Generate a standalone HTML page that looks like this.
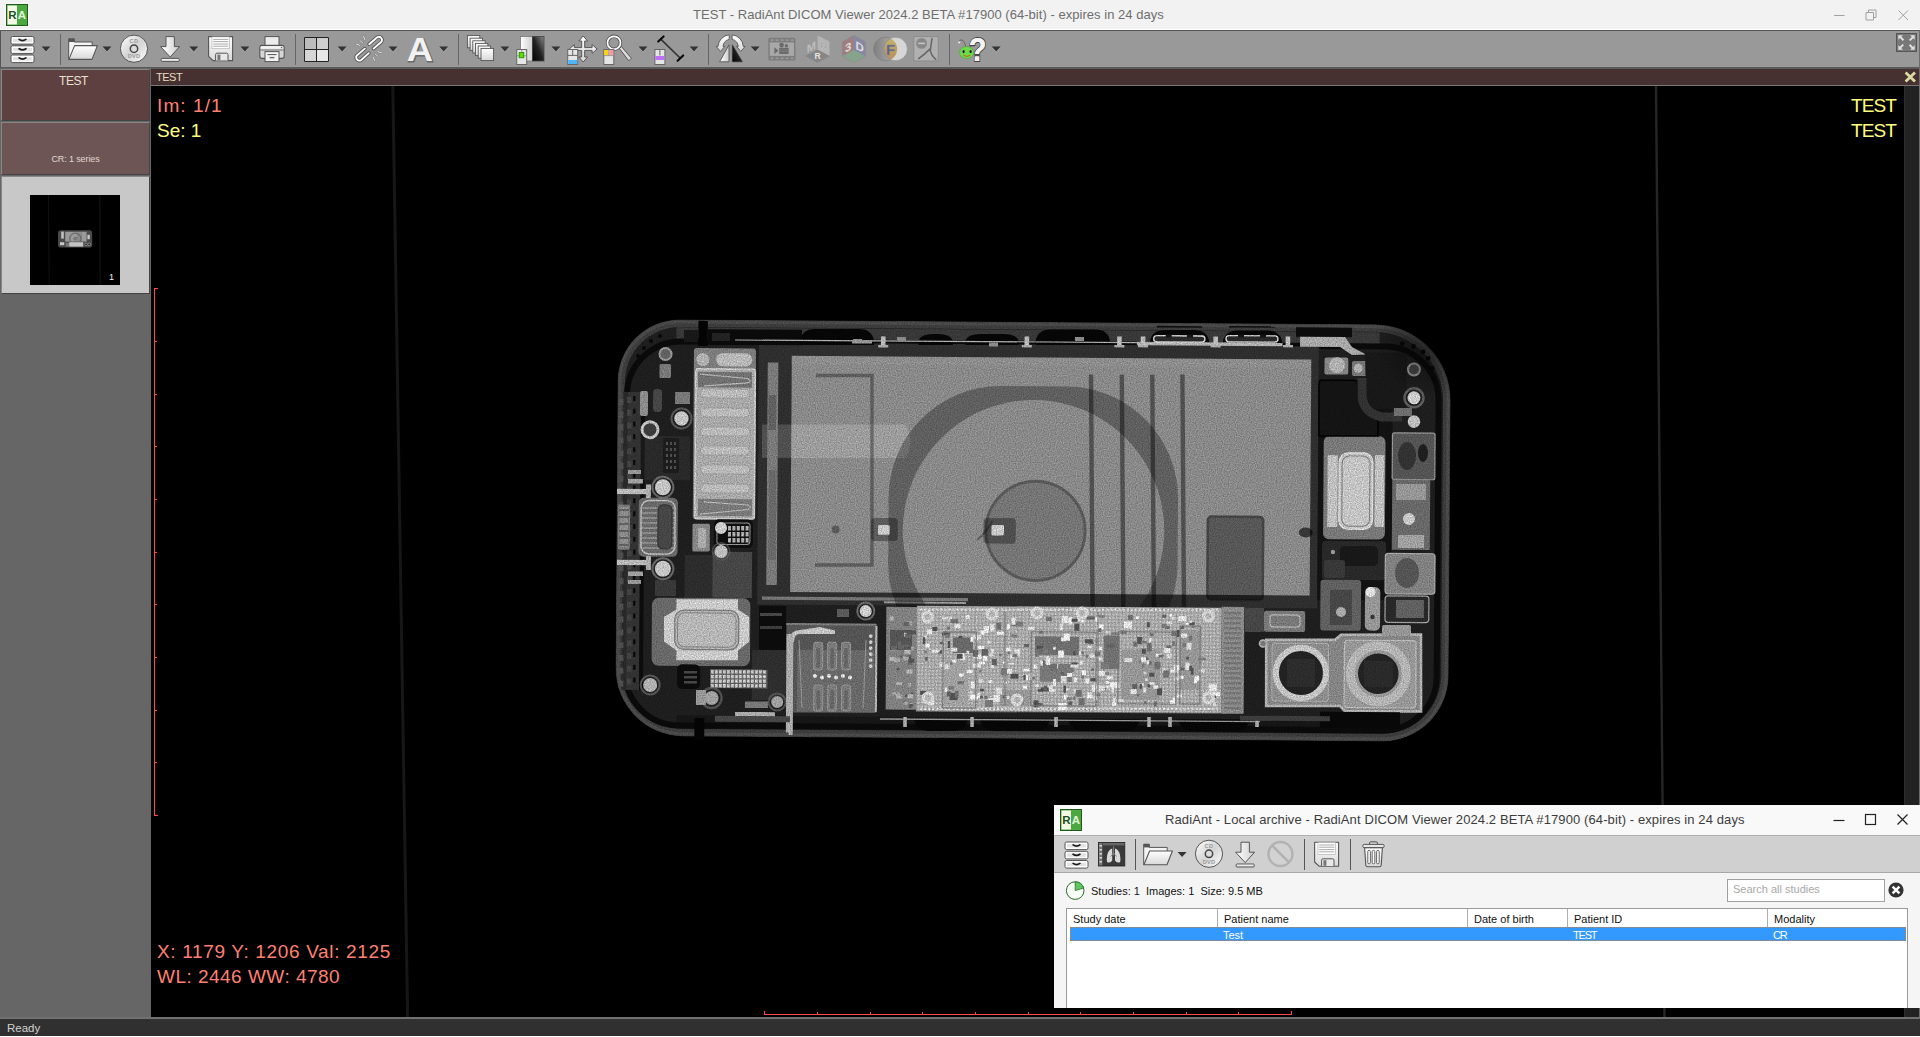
<!DOCTYPE html>
<html><head><meta charset="utf-8">
<style>
*{box-sizing:border-box;margin:0;padding:0}
html,body{width:1920px;height:1037px;overflow:hidden;background:#fff;font-family:"Liberation Sans",sans-serif;}
.abs{position:absolute}
#titlebar{left:0;top:0;width:1920px;height:29px;background:#f2f2f2}
#title{left:693px;top:0;line-height:30px;font-size:13px;letter-spacing:.035px;color:#6e6e6e;white-space:nowrap}
#tbline{left:0;top:29px;width:1920px;height:1px;background:#fff}
#toolbar{left:0;top:30px;width:1920px;height:39px;background:#999;border-top:1px solid #555;border-left:1px solid #555;border-bottom:2px solid #5a5a5a}
#left{left:0;top:68px;width:151px;height:951px;background:#666}
.lp{left:1px;width:149px;border:1px solid #888;border-right-color:#444;border-bottom-color:#444}
#vhead{left:151px;top:68px;width:1769px;height:18px;background:#473030;border-top:1px solid #5a5a5a;border-bottom:1px solid #777;color:#e6dcc0;font-size:11px;letter-spacing:-.5px;line-height:16px;padding-left:5px}
#view{left:151px;top:86px;width:1769px;height:931px;background:#000;overflow:hidden}
#status{overflow:hidden;left:0;top:1017px;width:1920px;height:19px;background:#303030;border-top:2px solid #707070;color:#d0d0d0;font-size:11.5px;line-height:19px;padding-left:7px}
.ov{font-size:19px;white-space:nowrap;line-height:25px}

#aw{left:1054px;top:805px;width:866px;height:203px;background:#f5f5f5;overflow:hidden}
#awt{left:0;top:0;width:866px;height:30px;background:#f9f9f9}
#awtitle{left:111px;top:0;line-height:30px;font-size:13px;letter-spacing:.105px;color:#3c3c3c;white-space:nowrap}
#awtb{left:0;top:30px;width:866px;height:38px;background:#d0d0d0;border-top:1px solid #b0b0b0;border-bottom:1px solid #a8a8a8}
#awinfo{left:37px;top:79px;font-size:11px;color:#111;white-space:pre;line-height:14px}
#awsearch{left:673px;top:74px;width:158px;height:23px;background:#fff;border:1px solid #a0a0a0;color:#a8a8a8;font-size:11px;line-height:19px;padding-left:5px}
#awtable{left:12px;top:103px;width:842px;height:110px;background:#fff;border:1px solid #999}
.th{top:0;height:18px;font-size:11px;color:#111;line-height:21px;padding-left:6px;border-left:1px solid #b0b0b0;white-space:nowrap}
#awrow{left:3px;top:18px;width:836px;height:14px;background:#3399ff;outline:1px dotted #c9803a;outline-offset:-1px}
.td{top:0;font-size:11px;color:#fff;line-height:16px;white-space:nowrap}
</style></head><body>
<div class="abs" id="titlebar"></div>
<div class="abs" id="title">TEST - RadiAnt DICOM Viewer 2024.2 BETA #17900 (64-bit) - expires in 24 days</div>
<div class="abs" id="tbline"></div>
<div class="abs" id="toolbar"></div>
<!--TBICONS--><svg class="abs" style="left:0;top:0" width="1920" height="70" viewBox="0 0 1920 70">
<defs>
<linearGradient id="gw" x1="0" y1="0" x2="0" y2="1"><stop offset="0" stop-color="#fff"/><stop offset="1" stop-color="#d8d8d8"/></linearGradient>
<linearGradient id="gwh" x1="0" y1="0" x2="1" y2="0"><stop offset="0" stop-color="#fff"/><stop offset="1" stop-color="#cfcfcf"/></linearGradient>
<linearGradient id="gbk" x1="1" y1="0" x2="0" y2="1"><stop offset="0" stop-color="#8a8a8a"/><stop offset=".5" stop-color="#222"/><stop offset="1" stop-color="#000"/></linearGradient>
<radialGradient id="gcd" cx=".5" cy=".5" r=".5"><stop offset="0" stop-color="#d0d0d0"/><stop offset=".6" stop-color="#e8e8e8"/><stop offset="1" stop-color="#fff"/></radialGradient>
<linearGradient id="gcd2" x1="0" y1="0" x2="1" y2="1"><stop offset="0" stop-color="#fff"/><stop offset=".5" stop-color="#d4d4d4"/><stop offset="1" stop-color="#fff"/></linearGradient>
<symbol id="dd" overflow="visible"><path d="M0 0h9l-4.5 5z" fill="#333"/><path d="M.3 .9L4.5 5.7 8.7 .9" fill="none" stroke="#bbb" stroke-width=".6" opacity=".6"/></symbol>
<symbol id="sep" overflow="visible"><rect x="0" y="34" width="1" height="31" fill="#666"/></symbol>
<symbol id="drw" overflow="visible">
 <g stroke="#555" stroke-width="1" fill="#fff"><rect x=".5" y=".5" width="23" height="7.6" rx="1.6"/><rect x=".5" y="9.8" width="23" height="7.6" rx="1.6"/><rect x=".5" y="19" width="23" height="7.6" rx="1.6"/></g>
 <g fill="#e2e2e2"><rect x="2.6" y="2.6" width="18.8" height="3.4"/><rect x="2.6" y="11.9" width="18.8" height="3.4"/><rect x="2.6" y="21.1" width="18.8" height="3.4"/></g>
 <g stroke="#1a1a1a" stroke-width="1.7" fill="none" stroke-linecap="round"><path d="M8.6 3.4q3.4 2.4 6.8 0"/><path d="M8.6 12.7q3.4 2.4 6.8 0"/><path d="M8.6 21.9q3.4 2.4 6.8 0"/></g>
</symbol>
<symbol id="fld" overflow="visible">
 <path d="M.7 21.5V.8h5.6v3.2H24.2v3.8" fill="#f4f4f4" stroke="#555" stroke-width="1"/>
 <rect x=".7" y=".6" width="5.8" height="3.4" fill="#555"/>
 <path d="M.9 21.4L6.6 7.6H29.4L24 21.4z" fill="url(#gw)" stroke="#555" stroke-width="1.1" stroke-linejoin="round"/>
</symbol>
<symbol id="cd" overflow="visible">
 <circle cx="0" cy="0" r="13.6" fill="url(#gcd2)" stroke="#555" stroke-width="1"/>
 <circle cx="0" cy="0" r="3.7" fill="#dcdcdc" stroke="#444" stroke-width="1.5"/>
 <text x="0" y="-6.2" font-family="Liberation Sans" font-size="5.6" font-weight="bold" fill="#999" text-anchor="middle" letter-spacing=".4">CD</text>
 <text x="0" y="9.8" font-family="Liberation Sans" font-size="5.6" font-weight="bold" fill="#999" text-anchor="middle" letter-spacing=".2">DVD</text>
</symbol>
<symbol id="dl" overflow="visible">
 <path d="M6 .6h8.4v10H19.6L10.2 21 .6 10.6H6z" fill="url(#gwh)" stroke="#555" stroke-width="1" stroke-linejoin="round"/>
 <rect x="1.2" y="22.4" width="18" height="3" rx=".8" fill="url(#gw)" stroke="#555" stroke-width="1"/>
</symbol>
<symbol id="flp" overflow="visible">
 <path d="M.6 .6H24.6V24.6H5L.6 20.4z" fill="url(#gw)" stroke="#555" stroke-width="1.1" stroke-linejoin="round"/>
 <rect x="4" y=".9" width="17.6" height="11.8" fill="#fff" stroke="#aaa" stroke-width=".6"/>
 <g stroke="#aaa" stroke-width="1"><path d="M5.2 3.4h15.2M5.2 5.6h15.2M5.2 8h15.2M5.2 10.2h15.2"/></g>
 <path d="M7.6 24.4V18.6q0-1.4 1.4-1.4H18.6q1.4 0 1.4 1.4V24.4" fill="#e8e8e8" stroke="#555" stroke-width="1"/>
 <rect x="9.4" y="18.6" width="3" height="5.6" fill="#777"/>
</symbol>
</defs>
<!-- main toolbar -->
<use href="#drw" x="10.5" y="36"/><use href="#dd" x="41.5" y="46.5"/>
<use href="#sep" x="60"/>
<use href="#fld" x="68" y="38"/><use href="#dd" x="102.5" y="46.5"/>
<use href="#cd" x="134" y="48.7"/>
<use href="#dl" x="160" y="36"/><use href="#dd" x="189.3" y="46.5"/>
<use href="#flp" x="208" y="36"/><use href="#dd" x="240.4" y="46.5"/>
<!-- printer -->
<g transform="translate(259,36)">
 <rect x="6" y=".6" width="14" height="10" fill="#ececec" stroke="#555" stroke-width="1"/>
 <rect x=".8" y="9.4" width="24.4" height="13" rx="2.4" fill="#d6d6d6" stroke="#555" stroke-width="1.1"/>
 <rect x="1.6" y="10.2" width="22.8" height="2.6" rx="1" fill="#f4f4f4"/>
 <path d="M1.4 14h23.2" stroke="#666" stroke-width=".9"/>
 <circle cx="22.6" cy="11.6" r=".8" fill="#666"/>
 <rect x="6" y="15.6" width="14" height="10" fill="#f2f2f2" stroke="#555" stroke-width="1"/>
 <path d="M8.4 18.6h9.2" stroke="#555" stroke-width="1"/><path d="M10.6 21.6h4.8" stroke="#666" stroke-width="1.4"/>
</g>
<use href="#sep" x="295"/>
<!-- grid -->
<g transform="translate(304,37)">
 <rect x="0" y="0" width="12.5" height="12.5" fill="#bcbcbc"/><rect x="12.5" y="0" width="12.5" height="12.5" fill="#cecece"/>
 <rect x="0" y="12.5" width="12.5" height="12.5" fill="#d6d6d6"/><rect x="12.5" y="12.5" width="12.5" height="12.5" fill="#e8e8e8"/>
 <path d="M.5 .5h24v24h-24zM12.5 .5v24M.5 12.5h24" fill="none" stroke="#222" stroke-width="1"/>
</g>
<use href="#dd" x="337.6" y="46.5"/>
<!-- broken link -->
<g fill="none" stroke-linecap="round">
 <path d="M369.2 44.2L377.2 37.2A3.2 3.2 0 0 1 381.4 41.8L373.6 48.6" stroke="#555" stroke-width="3.6"/>
 <path d="M369.2 44.2L377.2 37.2A3.2 3.2 0 0 1 381.4 41.8L373.6 48.6" stroke="#fff" stroke-width="1.8"/>
 <path d="M368.8 53.2L361 60.2A3.2 3.2 0 0 1 356.8 55.6L364.8 48.6" stroke="#555" stroke-width="3.6"/>
 <path d="M368.8 53.2L361 60.2A3.2 3.2 0 0 1 356.8 55.6L364.8 48.6" stroke="#fff" stroke-width="1.8"/>
 <g stroke="#777" stroke-width="1.8"><path d="M363.6 36.4l1.4 3.6M359.8 40.4l3 2.6M356.4 44l3.4 1.4M374.6 60.6l-1.4-3.6M378.2 56.6l-3-2.6M381.4 52.8l-3.4-1.2"/></g>
 <g stroke="#f4f4f4" stroke-width=".9"><path d="M363.6 36.4l1.4 3.6M359.8 40.4l3 2.6M356.4 44l3.4 1.4M374.6 60.6l-1.4-3.6M378.2 56.6l-3-2.6M381.4 52.8l-3.4-1.2"/></g>
</g>
<use href="#dd" x="388.5" y="46.5"/>
<!-- A -->
<g transform="translate(420,61) scale(1.07,1)"><text x="0" y="0" font-family="Liberation Sans" font-weight="bold" font-size="34" text-anchor="middle" fill="#777" stroke="#666" stroke-width="1.2" transform="translate(.6,.7)">A</text>
<text x="0" y="0" font-family="Liberation Sans" font-weight="bold" font-size="34" text-anchor="middle" fill="#f2f2f2">A</text></g>
<use href="#dd" x="439.2" y="46.5"/>
<use href="#sep" x="458"/>
<!-- stack -->
<g stroke="#555" stroke-width=".9">
 <rect x="467.4" y="35.6" width="12.4" height="12.2" fill="url(#gw)"/><rect x="470.1" y="38.2" width="12.4" height="12.2" fill="url(#gw)"/><rect x="472.8" y="40.8" width="12.4" height="12.2" fill="url(#gw)"/><rect x="475.5" y="43.4" width="12.4" height="12.2" fill="url(#gw)"/><rect x="478.2" y="46" width="12.4" height="12.2" fill="url(#gw)"/><rect x="481" y="48.4" width="12.6" height="12.2" fill="url(#gw)"/>
</g>
<use href="#dd" x="500.4" y="46.5"/>
<!-- gradient / window -->
<rect x="520.4" y="36.4" width="12" height="24.6" fill="url(#gwh)" stroke="#777" stroke-width=".8"/>
<rect x="532.4" y="36.4" width="11.6" height="24.6" fill="url(#gbk)" stroke="#444" stroke-width=".8"/>
<g transform="translate(516.2,49)"><rect x=".5" y=".5" width="10" height="15" fill="#e6e6e6" stroke="#666"/><path d="M.5 6.8h10M5.5 .5v3" stroke="#888" stroke-width=".8"/><rect x="3" y="3.4" width="4.6" height="5.4" fill="#5ce000" stroke="#1a8a00" stroke-width=".8"/></g>
<use href="#dd" x="551.4" y="46.5"/>
<!-- move -->
<path d="M583.2 36l4.4 5h-2.9v6.6h7.4v-3l5 4.4-5 4.4v-3h-7.4v6.6h2.9l-4.4 5-4.4-5h2.9v-6.6h-7.4v3l-5-4.4 5-4.4v3h7.400v-6.600h-2.900z" fill="url(#gw)" stroke="#555" stroke-width="1" stroke-linejoin="round"/>
<g transform="translate(567.2,49)"><rect x=".5" y=".5" width="10" height="15" fill="#e6e6e6" stroke="#666"/><path d="M.5 6.4h10M5.5 .5v6" stroke="#666" stroke-width="1"/><rect x="1" y="11" width="9" height="4" fill="#4ab6ff"/></g>
<!-- magnifier -->
<path d="M619.4 48.6l2-2 10 11.600-2.600 2.600z" fill="#ddd" stroke="#555" stroke-width="1" stroke-linejoin="round"/>
<circle cx="614" cy="42.8" r="6.500" fill="none" stroke="#555" stroke-width="3.400"/><circle cx="614" cy="42.8" r="6.500" fill="none" stroke="#fff" stroke-width="1.700"/>
<g transform="translate(603.3,49)"><rect x=".5" y=".5" width="10" height="15" fill="#e6e6e6" stroke="#666"/><rect x="1" y="1" width="4" height="5.2" fill="#ffd400"/><rect x="6" y="1" width="4" height="5.2" fill="#ff96a6"/><path d="M.5 6.600h10M5.500 .5v6" stroke="#888" stroke-width=".8"/></g>
<use href="#dd" x="638.5" y="46.5"/>
<!-- length -->
<path d="M661 39.4L680.4 58.200" stroke="#333" stroke-width="1.600"/>
<path d="M658.2 41.6l5.400-5.200M677.6 60.800l5.600-5.400" stroke="#0a0a0a" stroke-width="2.100" stroke-linecap="round"/>
<g transform="translate(654.4,49)"><rect x=".5" y=".5" width="10" height="15" fill="#e6e6e6" stroke="#666"/><path d="M5.500 .5v6" stroke="#666" stroke-width="1"/><rect x="1" y="7" width="9" height="4" fill="#c070ff"/></g>
<use href="#dd" x="689.5" y="46.5"/>
<use href="#sep" x="708"/>
<!-- flip -->
<path d="M719.6 61.800H729V44.800z" fill="url(#gwh)" stroke="#555" stroke-width=".9" stroke-linejoin="round"/>
<path d="M732.300 61.800H742.400L732.300 44.800z" fill="url(#gbk)" stroke="#333" stroke-width=".6"/>
<path d="M729.2 34.800A12.400 12.400 0 0 0 718 46.400H716.200L720.500 51.400 724.800 46.400H723A8.200 8.200 0 0 1 729.200 39.400Z" fill="url(#gw)" stroke="#555" stroke-width=".9" stroke-linejoin="round"/>
<path d="M732.100 34.800A12.400 12.400 0 0 1 743.300 46.400H745.100L740.800 51.400 736.500 46.400H738.300A8.200 8.200 0 0 0 732.100 39.400Z" fill="url(#gw)" stroke="#555" stroke-width=".9" stroke-linejoin="round"/>
<use href="#dd" x="750.7" y="46.5"/>
<!-- film (disabled) -->
<g transform="translate(768,37.500)">
 <rect x=".3" y=".3" width="27.200" height="22.800" rx="1.600" fill="#7e7e7e"/>
 <rect x="1.800" y="5" width="24.200" height="13.400" fill="#a8a8a8"/>
 <g fill="#a4a4a4"><rect x="2.800" y="2" width="2.600" height="1.200"/><rect x="7.800" y="2" width="2.600" height="1.200"/><rect x="12.800" y="2" width="2.600" height="1.200"/><rect x="17.800" y="2" width="2.600" height="1.200"/><rect x="22.800" y="2" width="2.600" height="1.200"/>
 <rect x="2.800" y="20.200" width="2.600" height="1.200"/><rect x="7.800" y="20.200" width="2.600" height="1.200"/><rect x="12.800" y="20.200" width="2.600" height="1.200"/><rect x="17.800" y="20.200" width="2.600" height="1.200"/><rect x="22.800" y="20.200" width="2.600" height="1.200"/></g>
 <g fill="#696969"><path d="M6.400 9.800l4 3.400-4 3.400z"/><rect x="11.200" y="10.200" width="9.400" height="6.400" rx=".6"/><circle cx="13.600" cy="7.600" r="2.300"/><circle cx="18.400" cy="8.200" r="1.600"/></g>
 <path d="M11.600 12.400h8.200M11.600 14.200h8.200" stroke="#8c8c8c" stroke-width=".6"/>
</g>
<!-- MPR cube (disabled) -->
<g>
 <path d="M817.500 35.300L829.600 41.600V56L817.500 62.800 805.400 56V41.600z" fill="#909090"/>
 <path d="M805.400 41.600L817.500 35.300V49.800L805.400 56z" fill="#9a9a9a"/>
 <path d="M817.500 35.300L829.600 41.600V56L817.500 49.800z" fill="#b4b4b4"/>
 <path d="M805.400 56L817.500 49.800 829.600 56 817.500 62.800z" fill="#868686"/>
 <g font-family="Liberation Sans" font-weight="bold" text-anchor="middle">
  <text x="811.400" y="51" font-size="11" fill="#bdbdbd" transform="skewY(-27)" style="transform-origin:811.400px 47px">M</text>
  <text x="823.600" y="50" font-size="10" fill="#9a9a9a" stroke="#c4c4c4" stroke-width=".5" transform="skewY(27)" style="transform-origin:823.600px 46px">P</text>
  <text x="817.700" y="59.400" font-size="8.600" fill="#e4e4e4">R</text>
 </g>
</g>
<!-- 3D cube (disabled) -->
<g>
 <path d="M842.300 42L853.800 35.300V50.200L842.300 56.200z" fill="#a07e7e"/>
 <path d="M853.800 35.300L865.500 42V56.200L853.800 50.200z" fill="#8686a6"/>
 <path d="M842.300 56.200L853.800 50.200 865.500 56.200 853.800 62.800z" fill="#86a48c"/>
 <path d="M842.300 42L853.800 35.300 865.500 42V56.200L853.800 62.800 842.300 56.200z" fill="none" stroke="#8a8a8a" stroke-width=".6"/>
 <g font-family="Liberation Sans" font-weight="bold" text-anchor="middle">
  <text x="848.200" y="51.200" font-size="11.500" fill="#dedede" transform="skewY(-27)" style="transform-origin:848.200px 47px">3</text>
  <text x="859.600" y="51" font-size="11.500" fill="#dedede" transform="skewY(27)" style="transform-origin:859.600px 47px">D</text>
 </g>
</g>
<!-- fusion -->
<g>
 <defs><clipPath id="cpL"><circle cx="885.400" cy="49" r="11.800"/></clipPath>
 <linearGradient id="gF" x1="0" y1="0" x2="0" y2="1"><stop offset="0" stop-color="#c4b46a"/><stop offset="1" stop-color="#ba8c5c"/></linearGradient>
 <linearGradient id="gL" x1="0" y1="0" x2="1" y2="0"><stop offset="0" stop-color="#7e7e7e"/><stop offset="1" stop-color="#b4b4b4"/></linearGradient></defs>
 <circle cx="885.400" cy="49" r="11.800" fill="url(#gL)" stroke="#808080" stroke-width=".8"/>
 <circle cx="895.600" cy="49" r="11.800" fill="#d6d6d6" stroke="#999" stroke-width=".8"/>
 <circle cx="895.600" cy="49" r="11.800" fill="url(#gF)" clip-path="url(#cpL)" stroke="#8a8a9a" stroke-width=".8"/>
 <text x="890.500" y="54.600" font-family="Liberation Sans" font-weight="bold" font-size="15" text-anchor="middle" fill="#5a6078" stroke="#888ea0" stroke-width=".5">F</text>
</g>
<!-- vessel (disabled) -->
<g>
 <rect x="913.800" y="36.600" width="24.400" height="24.400" fill="#b0b0b0" stroke="#8a8a8a" stroke-width=".9"/>
 <circle cx="921.600" cy="43.400" r="5.400" fill="#888"/><path d="M918.200 43.400h6.800" stroke="#c8c8c8" stroke-width="1.500"/>
 <path d="M932 38.400q-1 6-1.600 11.600 0 4.600 5.400 9.400M930.400 48.600q-6 6-11.800 10" fill="none" stroke="#666" stroke-width="1.500" stroke-linecap="round"/>
</g>
<use href="#sep" x="949"/>
<!-- ant help -->
<g>
 <path d="M965.800 47.400q-.8-6-4-7.400-2.400-.6-2.600 1.600M970.400 47.200q.8-4.600 4.200-5.800" fill="none" stroke="#555" stroke-width=".8"/>
 <circle cx="959.200" cy="42.400" r="1.300" fill="#eee" stroke="#888" stroke-width=".5"/>
 <ellipse cx="966.600" cy="52.600" rx="7" ry="6" fill="#6cdc48" stroke="#4aa830" stroke-width=".6"/>
 <ellipse cx="963.600" cy="51.600" rx="1.100" ry="1.600" fill="#2a1040"/><ellipse cx="970.600" cy="51.600" rx="1.100" ry="1.600" fill="#2a1040"/>
 <path d="M963.400 55.400q3.400 2 6.800 0" fill="none" stroke="#d04818" stroke-width=".9"/>
 <g transform="translate(977.400,61) scale(.84,1)"><text x="0" y="0" font-family="Liberation Sans" font-weight="bold" font-size="34" text-anchor="middle" fill="#fff" stroke="#444" stroke-width="2.200" paint-order="stroke" transform="translate(.4,.4)">?</text>
 <text x="0" y="0" font-family="Liberation Sans" font-weight="bold" font-size="34" text-anchor="middle" fill="#f4f4f4">?</text></g>
</g>
<use href="#dd" x="991.700" y="46.500"/>
<!-- fullscreen -->
<g>
 <rect x="1896.500" y="33.500" width="20" height="18" fill="#787878" stroke="#555"/>
 <g fill="#e0e0e0"><path d="M1898.300 35.200h4.600l-1.500 1.500 2.800 2.800-1.400 1.400-2.800-2.800-1.700 1.700z"/><path d="M1914.700 35.200v4.600l-1.500-1.500-2.800 2.800-1.400-1.400 2.800-2.800-1.700-1.700z"/><path d="M1898.300 49.800v-4.600l1.500 1.500 2.800-2.800 1.400 1.400-2.800 2.800 1.700 1.700z"/><path d="M1914.700 49.800h-4.600l1.500-1.500-2.800-2.800 1.400-1.400 2.800 2.800 1.700-1.700z"/></g>
</g>
<!-- main window controls (inactive) -->
<g stroke="#a0a0a0" stroke-width="1" fill="none"><path d="M1834 15.500h10.500"/><path d="M1866 12.500h7.500v7.500h-7.500zM1868.500 12.500v-2.500h7.500v7.500h-2.500"/><path d="M1898.500 10.500l9.500 9.500M1908 10.500l-9.500 9.500"/></g>
<!-- RA logo -->
<g id="ralogo">
 <rect x="5.500" y="3.500" width="23" height="23" fill="#fff"/>
 <rect x="6.500" y="4.500" width="21" height="21" fill="#4ca840" stroke="#1f5a1a" stroke-width="1"/>
 <rect x="7.500" y="5.500" width="9.500" height="19" fill="#f6f8e8"/>
 <text x="12.300" y="18.600" font-family="Liberation Sans" font-weight="bold" font-size="11.500" text-anchor="middle" fill="#1d4f1a">R</text>
 <text x="21.900" y="18.600" font-family="Liberation Sans" font-weight="bold" font-size="11.500" text-anchor="middle" fill="#e4f2d8">A</text>
</g>

</svg>
<!--/TBICONS-->
<div class="abs" id="left"></div>
<div class="abs lp" style="top:69px;height:52px;background:#5e4040;color:#e8e0d0;text-align:center;font-size:12px;letter-spacing:-.4px;line-height:22px;padding-right:4px">TEST</div>
<div class="abs lp" style="top:122px;height:53px;background:#6e5555;color:#e0d8d0;text-align:center;font-size:9px;letter-spacing:-.12px;padding-top:31px">CR: 1 series</div>
<div class="abs lp" style="top:176px;height:118px;background:#c8c8c8"></div>
<svg class="abs" style="left:30px;top:195px" width="90" height="90" viewBox="0 0 90 90">
<rect width="90" height="90" fill="#000"/>
<path d="M18.500 0L19.200 90" stroke="#161616" stroke-width=".8"/><path d="M69.800 0L70.200 90" stroke="#1c1c1c" stroke-width=".8"/>
<g filter="url(#tb)"><rect x="28" y="35.200" width="34.200" height="17.400" rx="2.800" fill="#4a4a4a"/>
<rect x="35.200" y="36.800" width="21.400" height="9.800" fill="#9a9a9a"/>
<circle cx="45.300" cy="43.800" r="5.600" fill="none" stroke="#6a6a6a" stroke-width="1.200"/><circle cx="45.300" cy="43.800" r="2" fill="#777"/>
<rect x="31.200" y="36.600" width="2.600" height="7" fill="#c0c0c0"/><rect x="57.400" y="39.800" width="2.400" height="4.400" fill="#c8c8c8"/>
<rect x="30" y="47.200" width="4.200" height="3" fill="#c8c8c8"/>
<rect x="39.200" y="47.200" width="14" height="4.400" fill="#c4c4c4"/><rect x="35.600" y="47.800" width="3.400" height="3.800" fill="#777"/>
<circle cx="56" cy="49.400" r="1.300" fill="#222" stroke="#bbb" stroke-width=".6"/><circle cx="59.200" cy="49.400" r="1.300" fill="#222" stroke="#bbb" stroke-width=".6"/>
<path d="M47.600 37.400v9.400M48.900 37.400v9.400M50.200 37.400v9.400M51.500 37.400v9.400" stroke="#666" stroke-width=".4"/></g>
<defs><filter id="tb"><feGaussianBlur stdDeviation=".35"/></filter></defs>
<text x="81.500" y="85.400" font-family="Liberation Sans" font-size="9" fill="#f0f0f0" text-anchor="middle">1</text>
</svg>
<div class="abs" id="vhead">TEST</div>
<svg class="abs" style="left:1903px;top:70px" width="15" height="14"><path d="M2.600 2.600l9.400 9M12 2.600l-9.400 9" stroke="#dadaa2" stroke-width="2.800"/></svg>
<div class="abs" id="view">
<!--PHONE--><svg class="abs" style="left:0;top:0" width="1769" height="931" viewBox="151 86 1769 931">
<defs>
<filter id="xr" x="600" y="305" width="870" height="450" filterUnits="userSpaceOnUse" color-interpolation-filters="sRGB">
<feGaussianBlur in="SourceGraphic" stdDeviation=".55" result="b"/>
<feTurbulence type="fractalNoise" baseFrequency=".85" numOctaves="1" seed="3" result="n"/>
<feColorMatrix in="n" type="matrix" values="1.6 0 0 0 -.3  1.6 0 0 0 -.3  1.6 0 0 0 -.3  0 0 0 0 1" result="ng"/>
<feGaussianBlur in="ng" stdDeviation=".6" result="nb"/>
<feComposite in="b" in2="nb" operator="arithmetic" k1=".4" k2=".8" k3="0" k4="0" result="m"/>
<feComposite in="m" in2="b" operator="in"/>
</filter>
</defs>
<path d="M542.800 86L557.600 1017" stroke="#171717" stroke-width="3" fill="none" transform="translate(-150,0)"/>
<path d="M1656 86L1664.500 1017" stroke="#262626" stroke-width="2.400" fill="none"/>
<g filter="url(#xr)"><g transform="rotate(0.407 1033.1 530.4)">
<path d="M678.5 321.9H1373.7A76 76 0 0 1 1449.7 397.9V672.9A66 66 0 0 1 1383.7 738.9H684.5A68 68 0 0 1 616.5 670.9V383.9A62 62 0 0 1 678.5 321.9Z" fill="#3c3c3c"/>
<path d="M678.5 324.4H1373.7A73.5 73.5 0 0 1 1447.2 397.9V672.9A63.5 63.5 0 0 1 1383.7 736.4H684.5A65.5 65.5 0 0 1 619 670.9V383.9A59.5 59.5 0 0 1 678.5 324.4Z" fill="none" stroke="#585858" stroke-width="3" opacity=".48"/>
<path d="M679 329.4H1373.2A69 69 0 0 1 1442.2 398.4V672.4A59 59 0 0 1 1383.2 731.4H685A61 61 0 0 1 624 670.4V384.4A55 55 0 0 1 679 329.4Z" fill="#1e1e1e"/>
<rect x="675.1" y="329.9" width="703.2" height="12" fill="#383838"/>
<rect x="677.9" y="717.9" width="709.2" height="12" fill="#161616"/>
<rect x="626" y="343.9" width="811.7" height="384" rx="54" fill="none" stroke="#0a0a0a" stroke-width="6"/>
<rect x="622.6" y="394.9" width="17.5" height="298" fill="#323232"/>
<rect x="622.6" y="394.9" width="4.5" height="298" fill="#282828"/>
<rect x="632.3" y="398.8" width="2.2" height="5" fill="#080808"/>
<rect x="617.5" y="401.9" width="5" height="6" fill="#4e4e4e"/>
<rect x="626.1" y="399.9" width="4.5" height="6" fill="#424242"/>
<rect x="632.4" y="411.6" width="2.2" height="5" fill="#080808"/>
<rect x="617.6" y="414.7" width="5" height="6" fill="#4e4e4e"/>
<rect x="626.2" y="412.7" width="4.5" height="6" fill="#424242"/>
<rect x="632.5" y="424.4" width="2.2" height="5" fill="#080808"/>
<rect x="617.7" y="427.5" width="5" height="6" fill="#4e4e4e"/>
<rect x="626.3" y="425.5" width="4.5" height="6" fill="#424242"/>
<rect x="632.5" y="437.2" width="2.2" height="5" fill="#080808"/>
<rect x="617.8" y="440.3" width="5" height="6" fill="#4e4e4e"/>
<rect x="626.4" y="438.3" width="4.5" height="6" fill="#424242"/>
<rect x="632.6" y="450" width="2.2" height="5" fill="#080808"/>
<rect x="617.9" y="453.1" width="5" height="6" fill="#4e4e4e"/>
<rect x="626.4" y="451.1" width="4.5" height="6" fill="#424242"/>
<rect x="632.7" y="462.8" width="2.2" height="5" fill="#080808"/>
<rect x="618" y="465.9" width="5" height="6" fill="#4e4e4e"/>
<rect x="626.5" y="463.9" width="4.5" height="6" fill="#424242"/>
<rect x="632.8" y="475.6" width="2.2" height="5" fill="#080808"/>
<rect x="618" y="478.7" width="5" height="6" fill="#4e4e4e"/>
<rect x="626.6" y="476.7" width="4.5" height="6" fill="#424242"/>
<rect x="632.9" y="488.4" width="2.2" height="5" fill="#080808"/>
<rect x="618.1" y="491.5" width="5" height="6" fill="#4e4e4e"/>
<rect x="626.7" y="489.5" width="4.5" height="6" fill="#424242"/>
<rect x="633" y="501.2" width="2.2" height="5" fill="#080808"/>
<rect x="618.2" y="504.3" width="5" height="6" fill="#4e4e4e"/>
<rect x="626.8" y="502.3" width="4.5" height="6" fill="#424242"/>
<rect x="633.1" y="514" width="2.2" height="5" fill="#080808"/>
<rect x="618.3" y="517.1" width="5" height="6" fill="#4e4e4e"/>
<rect x="626.9" y="515.1" width="4.5" height="6" fill="#424242"/>
<rect x="633.2" y="526.8" width="2.2" height="5" fill="#080808"/>
<rect x="618.4" y="529.9" width="5" height="6" fill="#4e4e4e"/>
<rect x="627" y="527.9" width="4.5" height="6" fill="#424242"/>
<rect x="633.3" y="539.6" width="2.2" height="5" fill="#080808"/>
<rect x="618.5" y="542.7" width="5" height="6" fill="#4e4e4e"/>
<rect x="627.1" y="540.7" width="4.5" height="6" fill="#424242"/>
<rect x="633.4" y="552.4" width="2.2" height="5" fill="#080808"/>
<rect x="618.6" y="555.5" width="5" height="6" fill="#4e4e4e"/>
<rect x="627.2" y="553.5" width="4.5" height="6" fill="#424242"/>
<rect x="633.5" y="565.2" width="2.2" height="5" fill="#080808"/>
<rect x="618.7" y="568.3" width="5" height="6" fill="#4e4e4e"/>
<rect x="627.3" y="566.3" width="4.5" height="6" fill="#424242"/>
<rect x="633.5" y="578" width="2.2" height="5" fill="#080808"/>
<rect x="618.8" y="581.1" width="5" height="6" fill="#4e4e4e"/>
<rect x="627.4" y="579.1" width="4.5" height="6" fill="#424242"/>
<rect x="633.6" y="590.8" width="2.2" height="5" fill="#080808"/>
<rect x="618.9" y="593.9" width="5" height="6" fill="#4e4e4e"/>
<rect x="627.4" y="591.9" width="4.5" height="6" fill="#424242"/>
<rect x="633.7" y="603.6" width="2.2" height="5" fill="#080808"/>
<rect x="619" y="606.7" width="5" height="6" fill="#4e4e4e"/>
<rect x="627.5" y="604.7" width="4.5" height="6" fill="#424242"/>
<rect x="633.8" y="616.4" width="2.2" height="5" fill="#080808"/>
<rect x="619" y="619.5" width="5" height="6" fill="#4e4e4e"/>
<rect x="627.6" y="617.5" width="4.5" height="6" fill="#424242"/>
<rect x="633.9" y="629.2" width="2.2" height="5" fill="#080808"/>
<rect x="619.1" y="632.3" width="5" height="6" fill="#4e4e4e"/>
<rect x="627.7" y="630.3" width="4.5" height="6" fill="#424242"/>
<rect x="634" y="642" width="2.2" height="5" fill="#080808"/>
<rect x="619.2" y="645.1" width="5" height="6" fill="#4e4e4e"/>
<rect x="627.8" y="643.1" width="4.5" height="6" fill="#424242"/>
<rect x="634.1" y="654.8" width="2.2" height="5" fill="#080808"/>
<rect x="619.3" y="657.9" width="5" height="6" fill="#4e4e4e"/>
<rect x="627.9" y="655.9" width="4.5" height="6" fill="#424242"/>
<rect x="634.2" y="667.6" width="2.2" height="5" fill="#080808"/>
<rect x="619.4" y="670.7" width="5" height="6" fill="#4e4e4e"/>
<rect x="628" y="668.7" width="4.5" height="6" fill="#424242"/>
<rect x="634.3" y="680.4" width="2.2" height="5" fill="#080808"/>
<rect x="619.5" y="683.5" width="5" height="6" fill="#4e4e4e"/>
<rect x="628.1" y="681.5" width="4.5" height="6" fill="#424242"/>
<rect x="640.1" y="394.8" width="4" height="298" fill="#0c0c0c"/>
<rect x="757.6" y="344.5" width="560" height="262" fill="#2e2e2e"/>
<rect x="790.6" y="357.5" width="519.5" height="236.1" fill="#898989"/>
<rect x="762.5" y="598.4" width="206" height="3.2" fill="#767676"/>
<rect x="884.5" y="602.4" width="82" height="2" fill="#969696"/>
<path d="M761.3 426.4 L904.3 425.4 Q915.4 441.8 904.5 458.9 L761.5 459.9 Z" fill="#ffffff" opacity="0.16"/>
<rect x="789.8" y="357.5" width="519.5" height="8.4" fill="#ffffff" opacity="0.04"/>
<path fill-rule="evenodd" fill="#000" opacity=".3" d="M1000.4 386.2H1065.8A112 112 0 0 1 1177.8 498.2V564A112 112 0 0 1 1065.8 676H1000.4A112 112 0 0 1 888.4 564V498.2A112 112 0 0 1 1000.4 386.2Z M1033.5 400a130.7 130.7 0 1 0 .01 0z"/>
<circle cx="1035.5" cy="530.8" r="50.9" fill="#000000" opacity="0.14"/>
<circle cx="1035.5" cy="530.8" r="49.6" fill="none" stroke="#000000" stroke-width="3" opacity="0.25"/>
<path d="M814.9 377 L870.9 376.6 L872.2 566.1 L815.3 566.5" fill="none" stroke="#000000" stroke-width="3.4" opacity="0.33"/>
<path d="M1089.9 374.2L1093.1 606.6" stroke="#000000" stroke-width="4.4" opacity="0.42"/>
<path d="M1120.7 374L1123.9 606.4" stroke="#000000" stroke-width="4.4" opacity="0.42"/>
<path d="M1151.2 373.8L1154.4 606.1" stroke="#000000" stroke-width="4.4" opacity="0.42"/>
<path d="M1181.3 373.5L1184.5 605.9" stroke="#000000" stroke-width="4.4" opacity="0.42"/>
<rect x="1206.5" y="514.1" width="57.9" height="84.5" rx="4.5" fill="#000000" opacity="0.36"/>
<rect x="1207.8" y="515.4" width="55.3" height="83.2" rx="4" fill="none" stroke="#000000" stroke-width="2.4" opacity="0.22"/>
<circle cx="835.6" cy="530.8" r="4" fill="#000000" opacity="0.35"/>
<ellipse cx="1305.8" cy="530.5" rx="7" ry="5" fill="#000000" opacity="0.6"/>
<rect x="983.4" y="518.2" width="32.4" height="25.6" rx="4" fill="#000000" opacity="0.33"/>
<rect x="991.5" y="525.3" width="12.5" height="10.5" rx="1.5" fill="#c8c8c8"/>
<path d="M977.1 540.4 Q988 531.3 991.9 521.3" fill="none" stroke="#000000" stroke-width="2.2" opacity="0.3"/>
<rect x="871" y="519.1" width="26.8" height="23" rx="4" fill="#000000" opacity="0.33"/>
<rect x="878" y="526.1" width="11.7" height="9.8" rx="1.5" fill="#c8c8c8"/>
<rect x="692.7" y="350.4" width="62.1" height="171.2" rx="3" fill="#7c7c7c"/>
<circle cx="701.6" cy="361.9" r="6.5" fill="#b0b0b0"/>
<rect x="714.8" y="355.4" width="36.3" height="13.1" rx="6.5" fill="#b8b8b8"/>
<rect x="694.7" y="371.2" width="59.5" height="149.8" rx="2" fill="#a8a8a8" stroke="#c8c8c8" stroke-width="1.6"/>
<rect x="696.9" y="374.2" width="54" height="15.5" fill="#707070"/>
<path d="M698.9 376.4 L746.9 380.5 Q750.9 383 747 385 L703 388.3" fill="none" stroke="#b4b4b4" stroke-width="1.2"/>
<rect x="699.5" y="391.2" width="49" height="9" rx="4.5" fill="#bababa" stroke="#969696" stroke-width="0.8"/>
<rect x="699.7" y="410.2" width="49" height="9" rx="4.5" fill="#bababa" stroke="#969696" stroke-width="0.8"/>
<rect x="699.8" y="429.2" width="49" height="9" rx="4.5" fill="#bababa" stroke="#969696" stroke-width="0.8"/>
<rect x="699.9" y="448.2" width="49" height="9" rx="4.5" fill="#bababa" stroke="#969696" stroke-width="0.8"/>
<rect x="700.1" y="467.2" width="49" height="9" rx="4.5" fill="#bababa" stroke="#969696" stroke-width="0.8"/>
<rect x="700.2" y="486.2" width="49" height="9" rx="4.5" fill="#bababa" stroke="#969696" stroke-width="0.8"/>
<rect x="697.8" y="501.2" width="54" height="17" fill="#787878"/>
<path d="M699.9 516.4 L747.9 511.5 Q751.8 509 747.8 507 L703.8 504.3" fill="none" stroke="#b4b4b4" stroke-width="1.2"/>
<rect x="766.6" y="364.4" width="10.6" height="222.5" fill="#7a7a7a"/>
<rect x="767.7" y="396.9" width="7.5" height="35" fill="#606060"/>
<rect x="768.4" y="471.9" width="7.5" height="90" fill="#686868"/>
<circle cx="664.3" cy="356.7" r="6" fill="#606060" stroke="#969696" stroke-width="2"/>
<circle cx="680.7" cy="421" r="7.2" fill="#c4c4c4"/>
<circle cx="680.7" cy="421" r="10" fill="none" stroke="#6e6e6e" stroke-width="2" opacity="0.7"/>
<circle cx="649.3" cy="432.4" r="8" fill="#3c3c3c" stroke="#bebebe" stroke-width="3"/>
<rect x="658.4" y="366.6" width="11.5" height="14" rx="1.5" fill="#787878"/>
<rect x="639.1" y="393.8" width="8" height="25" rx="2" fill="#8c8c8c"/>
<rect x="652.1" y="391.7" width="9" height="23" rx="4" fill="#464646"/>
<rect x="662.5" y="440.6" width="16" height="35" rx="2" fill="#101010"/>
<rect x="665.4" y="444.6" width="2" height="3" fill="#464646"/>
<rect x="665.4" y="450.6" width="2" height="3" fill="#464646"/>
<rect x="665.5" y="456.6" width="2" height="3" fill="#464646"/>
<rect x="665.5" y="462.6" width="2" height="3" fill="#464646"/>
<rect x="665.6" y="468.6" width="2" height="3" fill="#464646"/>
<rect x="669.4" y="444.6" width="2" height="3" fill="#464646"/>
<rect x="669.4" y="450.6" width="2" height="3" fill="#464646"/>
<rect x="669.5" y="456.6" width="2" height="3" fill="#464646"/>
<rect x="669.5" y="462.6" width="2" height="3" fill="#464646"/>
<rect x="669.6" y="468.6" width="2" height="3" fill="#464646"/>
<rect x="673.4" y="444.5" width="2" height="3" fill="#464646"/>
<rect x="673.4" y="450.5" width="2" height="3" fill="#464646"/>
<rect x="673.5" y="456.5" width="2" height="3" fill="#464646"/>
<rect x="673.5" y="462.5" width="2" height="3" fill="#464646"/>
<rect x="673.6" y="468.5" width="2" height="3" fill="#464646"/>
<rect x="639.5" y="438.6" width="50" height="44" fill="#ffffff" opacity="0.05"/>
<rect x="674.1" y="394.5" width="15" height="12" fill="#787878"/>
<rect x="638.6" y="500.4" width="39.1" height="59" rx="5" fill="#686868"/>
<rect x="641" y="503.2" width="34" height="53.5" rx="8" fill="none" stroke="#bebebe" stroke-width="1.4"/>
<path d="M640.9 510.8L675.8 510.5" stroke="#aaaaaa" stroke-width="1"/>
<path d="M640.9 515.8L675.9 515.5" stroke="#aaaaaa" stroke-width="1"/>
<path d="M640.9 520.8L675.9 520.5" stroke="#aaaaaa" stroke-width="1"/>
<path d="M641 525.8L676 525.5" stroke="#aaaaaa" stroke-width="1"/>
<path d="M641 530.8L676 530.5" stroke="#aaaaaa" stroke-width="1"/>
<path d="M641 535.8L676 535.5" stroke="#aaaaaa" stroke-width="1"/>
<path d="M641.1 540.8L676.1 540.5" stroke="#aaaaaa" stroke-width="1"/>
<path d="M641.1 545.8L676.1 545.5" stroke="#aaaaaa" stroke-width="1"/>
<path d="M641.1 550.8L676.1 550.5" stroke="#aaaaaa" stroke-width="1"/>
<rect x="658" y="507.6" width="14" height="44" rx="5" fill="#464646" stroke="#323232" stroke-width="1.2"/>
<circle cx="662.6" cy="489.9" r="8" fill="#c4c4c4"/>
<circle cx="662.6" cy="489.9" r="10.5" fill="none" stroke="#787878" stroke-width="2" opacity="0.8"/>
<circle cx="663.2" cy="571.4" r="8" fill="#c4c4c4"/>
<circle cx="663.2" cy="571.4" r="10.5" fill="none" stroke="#787878" stroke-width="2" opacity="0.8"/>
<rect x="617.8" y="507.5" width="12.2" height="45.1" rx="1.5" fill="#787878"/>
<rect x="620" y="509.9" width="8" height="40" fill="#8c8c8c"/>
<rect x="618.9" y="511.9" width="10" height="2" fill="#606060"/>
<rect x="618.9" y="518.9" width="10" height="2" fill="#606060"/>
<rect x="619" y="525.9" width="10" height="2" fill="#606060"/>
<rect x="619" y="532.9" width="10" height="2" fill="#606060"/>
<rect x="619.1" y="539.9" width="10" height="2" fill="#606060"/>
<rect x="619.1" y="546.9" width="10" height="2" fill="#606060"/>
<rect x="616.7" y="491.8" width="33" height="5.2" fill="#b8b8b8"/>
<rect x="645.7" y="487.2" width="5" height="13.5" fill="#aaaaaa"/>
<rect x="617.2" y="562.8" width="33" height="5.2" fill="#b8b8b8"/>
<rect x="646.2" y="558.7" width="5" height="14" fill="#aaaaaa"/>
<rect x="627.7" y="481.8" width="15" height="4.5" fill="#a0a0a0"/>
<rect x="628.3" y="574.3" width="15" height="4.5" fill="#a0a0a0"/>
<rect x="627.6" y="472.8" width="13" height="4" fill="#969696"/>
<rect x="628.4" y="582.8" width="13" height="4" fill="#969696"/>
<rect x="692.5" y="526.1" width="17.4" height="27.8" rx="1.5" fill="#868686"/>
<rect x="698.1" y="530.4" width="8" height="20" rx="2" fill="#aaaaaa"/>
<rect x="714" y="521.5" width="39" height="28.6" rx="5" fill="#0e0e0e"/>
<rect x="717" y="525.1" width="33" height="21.5" rx="3" fill="none" stroke="#969696" stroke-width="1"/>
<rect x="728" y="528.2" width="3" height="4.5" fill="#b0b0b0"/>
<rect x="728" y="534.2" width="3" height="4.5" fill="#b0b0b0"/>
<rect x="728.1" y="540.2" width="3" height="4.5" fill="#b0b0b0"/>
<rect x="732.4" y="528.1" width="3" height="4.5" fill="#b0b0b0"/>
<rect x="732.4" y="534.1" width="3" height="4.5" fill="#b0b0b0"/>
<rect x="732.5" y="540.1" width="3" height="4.5" fill="#b0b0b0"/>
<rect x="736.8" y="528.1" width="3" height="4.5" fill="#b0b0b0"/>
<rect x="736.8" y="534.1" width="3" height="4.5" fill="#b0b0b0"/>
<rect x="736.9" y="540.1" width="3" height="4.5" fill="#b0b0b0"/>
<rect x="741.2" y="528.1" width="3" height="4.5" fill="#b0b0b0"/>
<rect x="741.2" y="534.1" width="3" height="4.5" fill="#b0b0b0"/>
<rect x="741.3" y="540.1" width="3" height="4.5" fill="#b0b0b0"/>
<rect x="745.6" y="528" width="3" height="4.5" fill="#b0b0b0"/>
<rect x="745.6" y="534" width="3" height="4.5" fill="#b0b0b0"/>
<rect x="745.7" y="540" width="3" height="4.5" fill="#b0b0b0"/>
<rect x="684.9" y="557.4" width="27.8" height="43" fill="#2c2c2c"/>
<rect x="712.7" y="554.1" width="39.6" height="46" fill="#464646"/>
<rect x="655.4" y="582.6" width="21" height="16" fill="#383838"/>
<circle cx="721" cy="530.2" r="6" fill="#cdcdcd"/>
<circle cx="721.2" cy="553.7" r="6.6" fill="#bebebe"/>
<circle cx="721.2" cy="553.7" r="8.6" fill="none" stroke="#5a5a5a" stroke-width="1.6" opacity="0.7"/>
<rect x="652.5" y="600.4" width="98.4" height="68" rx="7" fill="#686868"/>
<path d="M676.9 601.8 L738.5 601.4 L738.6 611.6 L749.9 619 L750.1 643.5 L738.9 652.6 L738.9 662.4 L677.3 662.8 L677.3 653 L664.8 644.1 L664.6 619.6 L677 612 Z" fill="#cacaca"/>
<rect x="675.5" y="612.6" width="63.9" height="39.4" rx="9" fill="#b0b0b0" stroke="#787878" stroke-width="1.3"/>
<rect x="678.3" y="615.3" width="58.4" height="34" rx="7" fill="#b6b6b6" stroke="#828282" stroke-width="1"/>
<rect x="753" y="651.9" width="34" height="50" fill="#2e2e2e"/>
<rect x="678.2" y="666.8" width="23" height="24.6" rx="5" fill="#0c0c0c"/>
<rect x="685" y="673.4" width="13" height="2.6" fill="#464646"/>
<rect x="685.1" y="678.4" width="13" height="2.6" fill="#464646"/>
<rect x="685.1" y="683.4" width="13" height="2.6" fill="#464646"/>
<rect x="711.1" y="671.4" width="57.4" height="18.9" fill="#606060"/>
<rect x="712" y="672.6" width="2.8" height="3.3" fill="#c8c8c8"/>
<rect x="712" y="677.2" width="2.8" height="3.3" fill="#c8c8c8"/>
<rect x="712.1" y="681.8" width="2.8" height="3.3" fill="#c8c8c8"/>
<rect x="712.1" y="686.4" width="2.8" height="3.3" fill="#c8c8c8"/>
<rect x="716" y="672.5" width="2.8" height="3.3" fill="#c8c8c8"/>
<rect x="716" y="677.1" width="2.8" height="3.3" fill="#c8c8c8"/>
<rect x="716.1" y="681.7" width="2.8" height="3.3" fill="#c8c8c8"/>
<rect x="716.1" y="686.3" width="2.8" height="3.3" fill="#c8c8c8"/>
<rect x="720" y="672.5" width="2.8" height="3.3" fill="#c8c8c8"/>
<rect x="720" y="677.1" width="2.8" height="3.3" fill="#c8c8c8"/>
<rect x="720.1" y="681.7" width="2.8" height="3.3" fill="#c8c8c8"/>
<rect x="720.1" y="686.3" width="2.8" height="3.3" fill="#c8c8c8"/>
<rect x="724" y="672.5" width="2.8" height="3.3" fill="#c8c8c8"/>
<rect x="724" y="677.1" width="2.8" height="3.3" fill="#c8c8c8"/>
<rect x="724.1" y="681.7" width="2.8" height="3.3" fill="#c8c8c8"/>
<rect x="724.1" y="686.3" width="2.8" height="3.3" fill="#c8c8c8"/>
<rect x="728" y="672.5" width="2.8" height="3.3" fill="#c8c8c8"/>
<rect x="728" y="677.1" width="2.8" height="3.3" fill="#c8c8c8"/>
<rect x="728.1" y="681.7" width="2.8" height="3.3" fill="#c8c8c8"/>
<rect x="728.1" y="686.3" width="2.8" height="3.3" fill="#c8c8c8"/>
<rect x="732" y="672.4" width="2.8" height="3.3" fill="#c8c8c8"/>
<rect x="732" y="677" width="2.8" height="3.3" fill="#c8c8c8"/>
<rect x="732.1" y="681.6" width="2.8" height="3.3" fill="#c8c8c8"/>
<rect x="732.1" y="686.2" width="2.8" height="3.3" fill="#c8c8c8"/>
<rect x="736" y="672.4" width="2.8" height="3.3" fill="#c8c8c8"/>
<rect x="736" y="677" width="2.8" height="3.3" fill="#c8c8c8"/>
<rect x="736.1" y="681.6" width="2.8" height="3.3" fill="#c8c8c8"/>
<rect x="736.1" y="686.2" width="2.8" height="3.3" fill="#c8c8c8"/>
<rect x="740" y="672.4" width="2.8" height="3.3" fill="#c8c8c8"/>
<rect x="740" y="677" width="2.8" height="3.3" fill="#c8c8c8"/>
<rect x="740.1" y="681.6" width="2.8" height="3.3" fill="#c8c8c8"/>
<rect x="740.1" y="686.2" width="2.8" height="3.3" fill="#c8c8c8"/>
<rect x="744" y="672.3" width="2.8" height="3.3" fill="#c8c8c8"/>
<rect x="744" y="676.9" width="2.8" height="3.3" fill="#c8c8c8"/>
<rect x="744.1" y="681.5" width="2.8" height="3.3" fill="#c8c8c8"/>
<rect x="744.1" y="686.1" width="2.8" height="3.3" fill="#c8c8c8"/>
<rect x="748" y="672.3" width="2.8" height="3.3" fill="#c8c8c8"/>
<rect x="748" y="676.9" width="2.8" height="3.3" fill="#c8c8c8"/>
<rect x="748.1" y="681.5" width="2.8" height="3.3" fill="#c8c8c8"/>
<rect x="748.1" y="686.1" width="2.8" height="3.3" fill="#c8c8c8"/>
<rect x="752" y="672.3" width="2.8" height="3.3" fill="#c8c8c8"/>
<rect x="752" y="676.9" width="2.8" height="3.3" fill="#c8c8c8"/>
<rect x="752.1" y="681.5" width="2.8" height="3.3" fill="#c8c8c8"/>
<rect x="752.1" y="686.1" width="2.8" height="3.3" fill="#c8c8c8"/>
<rect x="756" y="672.3" width="2.8" height="3.3" fill="#c8c8c8"/>
<rect x="756" y="676.9" width="2.8" height="3.3" fill="#c8c8c8"/>
<rect x="756.1" y="681.5" width="2.8" height="3.3" fill="#c8c8c8"/>
<rect x="756.1" y="686.1" width="2.8" height="3.3" fill="#c8c8c8"/>
<rect x="760" y="672.2" width="2.8" height="3.3" fill="#c8c8c8"/>
<rect x="760" y="676.8" width="2.8" height="3.3" fill="#c8c8c8"/>
<rect x="760.1" y="681.4" width="2.8" height="3.3" fill="#c8c8c8"/>
<rect x="760.1" y="686" width="2.8" height="3.3" fill="#c8c8c8"/>
<rect x="764" y="672.2" width="2.8" height="3.3" fill="#c8c8c8"/>
<rect x="764" y="676.8" width="2.8" height="3.3" fill="#c8c8c8"/>
<rect x="764.1" y="681.4" width="2.8" height="3.3" fill="#c8c8c8"/>
<rect x="764.1" y="686" width="2.8" height="3.3" fill="#c8c8c8"/>
<circle cx="651.3" cy="687.7" r="7" fill="#b0b0b0"/>
<circle cx="651.3" cy="687.7" r="9.5" fill="none" stroke="#6e6e6e" stroke-width="2" opacity="0.7"/>
<circle cx="712.8" cy="700.3" r="7" fill="#a0a0a0"/>
<circle cx="712.8" cy="700.3" r="10" fill="none" stroke="#646464" stroke-width="2.4" opacity="0.7"/>
<rect x="697.2" y="692.4" width="10" height="15" fill="#969696"/>
<circle cx="778.4" cy="703.9" r="6" fill="#a0a0a0"/>
<circle cx="778.4" cy="703.9" r="8.5" fill="none" stroke="#646464" stroke-width="2" opacity="0.7"/>
<rect x="746.2" y="703.5" width="23" height="6.5" fill="#787878"/>
<rect x="759.7" y="607.8" width="27" height="44" fill="#0c0c0c"/>
<rect x="760.6" y="614.9" width="22" height="3" fill="#464646"/>
<rect x="760.7" y="627.9" width="22" height="3" fill="#3c3c3c"/>
<rect x="787.2" y="624.8" width="90.2" height="89.4" fill="#545454"/>
<rect x="798.1" y="651.4" width="77" height="62" fill="#686868"/>
<rect x="787.3" y="635.7" width="6.6" height="98.5" fill="#acacac"/>
<path d="M789.8 641.7 Q790.7 632.2 800.7 631.7 L820.7 628.5 L835.7 631.9 L835.7 635.4 L800.7 635.7 Q794.7 635.7 794.8 643.7" fill="#c4c4c4"/>
<rect x="876" y="627.1" width="2.2" height="86" fill="#b0b0b0"/>
<rect x="786.9" y="624.8" width="90.2" height="2" fill="#969696" opacity="0.6"/>
<rect x="814.6" y="643.8" width="9" height="27.7" rx="2" fill="#7a7a7a" stroke="#969696" stroke-width="0.9"/>
<rect x="817.3" y="649.5" width="3.6" height="20" rx="1.5" fill="#646464"/>
<rect x="814.9" y="686.5" width="9" height="26" rx="2" fill="#7a7a7a" stroke="#969696" stroke-width="0.9"/>
<rect x="817.6" y="691.5" width="3.6" height="19" rx="1.5" fill="#646464"/>
<rect x="828.5" y="643.7" width="9" height="27.7" rx="2" fill="#7a7a7a" stroke="#969696" stroke-width="0.9"/>
<rect x="831.2" y="649.4" width="3.6" height="20" rx="1.5" fill="#646464"/>
<rect x="828.8" y="686.4" width="9" height="26" rx="2" fill="#7a7a7a" stroke="#969696" stroke-width="0.9"/>
<rect x="831.5" y="691.4" width="3.6" height="19" rx="1.5" fill="#646464"/>
<rect x="842.4" y="643.6" width="9" height="27.7" rx="2" fill="#7a7a7a" stroke="#969696" stroke-width="0.9"/>
<rect x="845.1" y="649.3" width="3.6" height="20" rx="1.5" fill="#646464"/>
<rect x="842.7" y="686.3" width="9" height="26" rx="2" fill="#7a7a7a" stroke="#969696" stroke-width="0.9"/>
<rect x="845.4" y="691.3" width="3.6" height="19" rx="1.5" fill="#646464"/>
<circle cx="816" cy="677.5" r="2" fill="#e1e1e1"/>
<circle cx="823.1" cy="679.1" r="2" fill="#e1e1e1"/>
<circle cx="830" cy="677.4" r="2" fill="#e1e1e1"/>
<circle cx="837.1" cy="679" r="2" fill="#e1e1e1"/>
<circle cx="844" cy="677.3" r="2" fill="#e1e1e1"/>
<circle cx="851.1" cy="678.9" r="2" fill="#e1e1e1"/>
<circle cx="871.5" cy="637.2" r="1.9" fill="#cdcdcd"/>
<circle cx="871.5" cy="643.2" r="1.9" fill="#cdcdcd"/>
<circle cx="871.5" cy="649.2" r="1.9" fill="#cdcdcd"/>
<circle cx="871.6" cy="655.2" r="1.9" fill="#cdcdcd"/>
<circle cx="871.6" cy="661.2" r="1.9" fill="#cdcdcd"/>
<circle cx="871.7" cy="667.2" r="1.9" fill="#cdcdcd"/>
<path d="M799.8 641.7L803.3 709.6" stroke="#969696" stroke-width="1"/>
<path d="M866.8 641.2L864.3 709.2" stroke="#969696" stroke-width="1"/>
<circle cx="866.3" cy="612.3" r="6" fill="#cdcdcd"/>
<circle cx="866.3" cy="612.3" r="8.5" fill="none" stroke="#787878" stroke-width="2" opacity="0.8"/>
<rect x="837.6" y="610.3" width="12" height="8" fill="#5a5a5a"/>
<rect x="886.9" y="607.7" width="30.6" height="102.9" fill="#808080"/>
<rect x="917.5" y="606.5" width="304.8" height="104.9" fill="#a6a6a6"/>
<rect x="1222.3" y="605.4" width="22.6" height="106.9" fill="#8a8a8a"/>
<defs><pattern id="bga" width="3.6" height="3.6" patternUnits="userSpaceOnUse"><rect width="3.6" height="3.6" fill="#8c8c8c"/><rect x=".5" y=".5" width="2.4" height="2.4" fill="#d2d2d2"/></pattern><pattern id="bga2" width="5" height="4" patternUnits="userSpaceOnUse"><rect width="5" height="4" fill="#9a9a9a"/><rect x=".6" y=".6" width="3.6" height="2.6" fill="#cecece"/></pattern></defs>
<rect x="917.1" y="607.6" width="304.8" height="104.9" fill="url(#bga)" opacity=".55"/>
<rect x="1035.8" y="636.3" width="44" height="18.5" fill="#6e6e6e"/>
<rect x="953.8" y="638" width="20" height="15.5" fill="#686868"/>
<rect x="1104.5" y="634.9" width="15.9" height="33.5" fill="#707070"/>
<rect x="1041" y="663.8" width="32" height="18" fill="#787878"/>
<rect x="1122" y="649.2" width="39" height="50" fill="#969696"/>
<rect x="945.1" y="660.5" width="24" height="46" fill="#a0a0a0"/>
<rect x="1180.9" y="628.9" width="20" height="60" fill="#969696"/>
<rect x="890.8" y="630.9" width="22" height="20" fill="#545454"/>
<rect x="1001.2" y="690.1" width="30" height="16" fill="#969696"/>
<rect x="920.6" y="609.4" width="2.2" height="2.2" fill="#d7d7d7"/>
<rect x="921.3" y="708.6" width="2.2" height="2.2" fill="#d7d7d7"/>
<rect x="924.6" y="609.4" width="2.2" height="2.2" fill="#d7d7d7"/>
<rect x="925.3" y="708.6" width="2.2" height="2.2" fill="#d7d7d7"/>
<rect x="928.7" y="609.3" width="2.2" height="2.2" fill="#d7d7d7"/>
<rect x="929.4" y="708.5" width="2.2" height="2.2" fill="#d7d7d7"/>
<rect x="932.7" y="609.3" width="2.2" height="2.2" fill="#d7d7d7"/>
<rect x="933.4" y="708.5" width="2.2" height="2.2" fill="#d7d7d7"/>
<rect x="936.8" y="609.3" width="2.2" height="2.2" fill="#d7d7d7"/>
<rect x="937.5" y="708.5" width="2.2" height="2.2" fill="#d7d7d7"/>
<rect x="940.8" y="609.2" width="2.2" height="2.2" fill="#d7d7d7"/>
<rect x="941.5" y="708.4" width="2.2" height="2.2" fill="#d7d7d7"/>
<rect x="944.9" y="609.2" width="2.2" height="2.2" fill="#d7d7d7"/>
<rect x="945.6" y="708.4" width="2.2" height="2.2" fill="#d7d7d7"/>
<rect x="948.9" y="609.2" width="2.2" height="2.2" fill="#d7d7d7"/>
<rect x="949.6" y="708.4" width="2.2" height="2.2" fill="#d7d7d7"/>
<rect x="953" y="609.2" width="2.2" height="2.2" fill="#d7d7d7"/>
<rect x="953.7" y="708.4" width="2.2" height="2.2" fill="#d7d7d7"/>
<rect x="957" y="609.1" width="2.2" height="2.2" fill="#d7d7d7"/>
<rect x="957.7" y="708.3" width="2.2" height="2.2" fill="#d7d7d7"/>
<rect x="961.1" y="609.1" width="2.2" height="2.2" fill="#d7d7d7"/>
<rect x="961.8" y="708.3" width="2.2" height="2.2" fill="#d7d7d7"/>
<rect x="965.1" y="609.1" width="2.2" height="2.2" fill="#d7d7d7"/>
<rect x="965.8" y="708.3" width="2.2" height="2.2" fill="#d7d7d7"/>
<rect x="969.2" y="609" width="2.2" height="2.2" fill="#d7d7d7"/>
<rect x="969.9" y="708.2" width="2.2" height="2.2" fill="#d7d7d7"/>
<rect x="973.2" y="609" width="2.2" height="2.2" fill="#d7d7d7"/>
<rect x="973.9" y="708.2" width="2.2" height="2.2" fill="#d7d7d7"/>
<rect x="977.3" y="609" width="2.2" height="2.2" fill="#d7d7d7"/>
<rect x="978" y="708.2" width="2.2" height="2.2" fill="#d7d7d7"/>
<rect x="981.3" y="609" width="2.2" height="2.2" fill="#d7d7d7"/>
<rect x="982" y="708.2" width="2.2" height="2.2" fill="#d7d7d7"/>
<rect x="985.4" y="608.9" width="2.2" height="2.2" fill="#d7d7d7"/>
<rect x="986.1" y="708.1" width="2.2" height="2.2" fill="#d7d7d7"/>
<rect x="989.4" y="608.9" width="2.2" height="2.2" fill="#d7d7d7"/>
<rect x="990.1" y="708.1" width="2.2" height="2.2" fill="#d7d7d7"/>
<rect x="993.5" y="608.9" width="2.2" height="2.2" fill="#d7d7d7"/>
<rect x="994.2" y="708.1" width="2.2" height="2.2" fill="#d7d7d7"/>
<rect x="997.5" y="608.8" width="2.2" height="2.2" fill="#d7d7d7"/>
<rect x="998.2" y="708" width="2.2" height="2.2" fill="#d7d7d7"/>
<rect x="1001.6" y="608.8" width="2.2" height="2.2" fill="#d7d7d7"/>
<rect x="1002.3" y="708" width="2.2" height="2.2" fill="#d7d7d7"/>
<rect x="1005.6" y="608.8" width="2.2" height="2.2" fill="#d7d7d7"/>
<rect x="1006.3" y="708" width="2.2" height="2.2" fill="#d7d7d7"/>
<rect x="1009.7" y="608.8" width="2.2" height="2.2" fill="#d7d7d7"/>
<rect x="1010.4" y="708" width="2.2" height="2.2" fill="#d7d7d7"/>
<rect x="1013.7" y="608.7" width="2.2" height="2.2" fill="#d7d7d7"/>
<rect x="1014.4" y="707.9" width="2.2" height="2.2" fill="#d7d7d7"/>
<rect x="1017.8" y="608.7" width="2.2" height="2.2" fill="#d7d7d7"/>
<rect x="1018.5" y="707.9" width="2.2" height="2.2" fill="#d7d7d7"/>
<rect x="1021.8" y="608.7" width="2.2" height="2.2" fill="#d7d7d7"/>
<rect x="1022.5" y="707.9" width="2.2" height="2.2" fill="#d7d7d7"/>
<rect x="1025.9" y="608.6" width="2.2" height="2.2" fill="#d7d7d7"/>
<rect x="1026.6" y="707.8" width="2.2" height="2.2" fill="#d7d7d7"/>
<rect x="1029.9" y="608.6" width="2.2" height="2.2" fill="#d7d7d7"/>
<rect x="1030.6" y="707.8" width="2.2" height="2.2" fill="#d7d7d7"/>
<rect x="1034" y="608.6" width="2.2" height="2.2" fill="#d7d7d7"/>
<rect x="1034.7" y="707.8" width="2.2" height="2.2" fill="#d7d7d7"/>
<rect x="1038" y="608.6" width="2.2" height="2.2" fill="#d7d7d7"/>
<rect x="1038.7" y="707.8" width="2.2" height="2.2" fill="#d7d7d7"/>
<rect x="1042.1" y="608.5" width="2.2" height="2.2" fill="#d7d7d7"/>
<rect x="1042.8" y="707.7" width="2.2" height="2.2" fill="#d7d7d7"/>
<rect x="1046.1" y="608.5" width="2.2" height="2.2" fill="#d7d7d7"/>
<rect x="1046.8" y="707.7" width="2.2" height="2.2" fill="#d7d7d7"/>
<rect x="1050.2" y="608.5" width="2.2" height="2.2" fill="#d7d7d7"/>
<rect x="1050.9" y="707.7" width="2.2" height="2.2" fill="#d7d7d7"/>
<rect x="1054.2" y="608.4" width="2.2" height="2.2" fill="#d7d7d7"/>
<rect x="1054.9" y="707.6" width="2.2" height="2.2" fill="#d7d7d7"/>
<rect x="1058.3" y="608.4" width="2.2" height="2.2" fill="#d7d7d7"/>
<rect x="1059" y="707.6" width="2.2" height="2.2" fill="#d7d7d7"/>
<rect x="1062.3" y="608.4" width="2.2" height="2.2" fill="#d7d7d7"/>
<rect x="1063" y="707.6" width="2.2" height="2.2" fill="#d7d7d7"/>
<rect x="1066.4" y="608.4" width="2.2" height="2.2" fill="#d7d7d7"/>
<rect x="1067.1" y="707.6" width="2.2" height="2.2" fill="#d7d7d7"/>
<rect x="1070.4" y="608.3" width="2.2" height="2.2" fill="#d7d7d7"/>
<rect x="1071.1" y="707.5" width="2.2" height="2.2" fill="#d7d7d7"/>
<rect x="1074.5" y="608.3" width="2.2" height="2.2" fill="#d7d7d7"/>
<rect x="1075.2" y="707.5" width="2.2" height="2.2" fill="#d7d7d7"/>
<rect x="1078.5" y="608.3" width="2.2" height="2.2" fill="#d7d7d7"/>
<rect x="1079.2" y="707.5" width="2.2" height="2.2" fill="#d7d7d7"/>
<rect x="1082.6" y="608.2" width="2.2" height="2.2" fill="#d7d7d7"/>
<rect x="1083.3" y="707.4" width="2.2" height="2.2" fill="#d7d7d7"/>
<rect x="1086.6" y="608.2" width="2.2" height="2.2" fill="#d7d7d7"/>
<rect x="1087.3" y="707.4" width="2.2" height="2.2" fill="#d7d7d7"/>
<rect x="1090.7" y="608.2" width="2.2" height="2.2" fill="#d7d7d7"/>
<rect x="1091.4" y="707.4" width="2.2" height="2.2" fill="#d7d7d7"/>
<rect x="1094.7" y="608.2" width="2.2" height="2.2" fill="#d7d7d7"/>
<rect x="1095.4" y="707.4" width="2.2" height="2.2" fill="#d7d7d7"/>
<rect x="1098.8" y="608.1" width="2.2" height="2.2" fill="#d7d7d7"/>
<rect x="1099.5" y="707.3" width="2.2" height="2.2" fill="#d7d7d7"/>
<rect x="1102.8" y="608.1" width="2.2" height="2.2" fill="#d7d7d7"/>
<rect x="1103.5" y="707.3" width="2.2" height="2.2" fill="#d7d7d7"/>
<rect x="1106.9" y="608.1" width="2.2" height="2.2" fill="#d7d7d7"/>
<rect x="1107.6" y="707.3" width="2.2" height="2.2" fill="#d7d7d7"/>
<rect x="1110.9" y="608" width="2.2" height="2.2" fill="#d7d7d7"/>
<rect x="1111.6" y="707.2" width="2.2" height="2.2" fill="#d7d7d7"/>
<rect x="1115" y="608" width="2.2" height="2.2" fill="#d7d7d7"/>
<rect x="1115.7" y="707.2" width="2.2" height="2.2" fill="#d7d7d7"/>
<rect x="1119" y="608" width="2.2" height="2.2" fill="#d7d7d7"/>
<rect x="1119.7" y="707.2" width="2.2" height="2.2" fill="#d7d7d7"/>
<rect x="1123.1" y="608" width="2.2" height="2.2" fill="#d7d7d7"/>
<rect x="1123.8" y="707.2" width="2.2" height="2.2" fill="#d7d7d7"/>
<rect x="1127.1" y="607.9" width="2.2" height="2.2" fill="#d7d7d7"/>
<rect x="1127.8" y="707.1" width="2.2" height="2.2" fill="#d7d7d7"/>
<rect x="1131.2" y="607.9" width="2.2" height="2.2" fill="#d7d7d7"/>
<rect x="1131.9" y="707.1" width="2.2" height="2.2" fill="#d7d7d7"/>
<rect x="1135.2" y="607.9" width="2.2" height="2.2" fill="#d7d7d7"/>
<rect x="1135.9" y="707.1" width="2.2" height="2.2" fill="#d7d7d7"/>
<rect x="1139.3" y="607.8" width="2.2" height="2.2" fill="#d7d7d7"/>
<rect x="1140" y="707" width="2.2" height="2.2" fill="#d7d7d7"/>
<rect x="1143.3" y="607.8" width="2.2" height="2.2" fill="#d7d7d7"/>
<rect x="1144" y="707" width="2.2" height="2.2" fill="#d7d7d7"/>
<rect x="1147.4" y="607.8" width="2.2" height="2.2" fill="#d7d7d7"/>
<rect x="1148.1" y="707" width="2.2" height="2.2" fill="#d7d7d7"/>
<rect x="1151.4" y="607.8" width="2.2" height="2.2" fill="#d7d7d7"/>
<rect x="1152.1" y="707" width="2.2" height="2.2" fill="#d7d7d7"/>
<rect x="1155.5" y="607.7" width="2.2" height="2.2" fill="#d7d7d7"/>
<rect x="1156.2" y="706.9" width="2.2" height="2.2" fill="#d7d7d7"/>
<rect x="1159.5" y="607.7" width="2.2" height="2.2" fill="#d7d7d7"/>
<rect x="1160.2" y="706.9" width="2.2" height="2.2" fill="#d7d7d7"/>
<rect x="1163.6" y="607.7" width="2.2" height="2.2" fill="#d7d7d7"/>
<rect x="1164.3" y="706.9" width="2.2" height="2.2" fill="#d7d7d7"/>
<rect x="1167.6" y="607.6" width="2.2" height="2.2" fill="#d7d7d7"/>
<rect x="1168.3" y="706.8" width="2.2" height="2.2" fill="#d7d7d7"/>
<rect x="1171.7" y="607.6" width="2.2" height="2.2" fill="#d7d7d7"/>
<rect x="1172.4" y="706.8" width="2.2" height="2.2" fill="#d7d7d7"/>
<rect x="1175.7" y="607.6" width="2.2" height="2.2" fill="#d7d7d7"/>
<rect x="1176.4" y="706.8" width="2.2" height="2.2" fill="#d7d7d7"/>
<rect x="1179.8" y="607.6" width="2.2" height="2.2" fill="#d7d7d7"/>
<rect x="1180.5" y="706.7" width="2.2" height="2.2" fill="#d7d7d7"/>
<rect x="1183.8" y="607.5" width="2.2" height="2.2" fill="#d7d7d7"/>
<rect x="1184.5" y="706.7" width="2.2" height="2.2" fill="#d7d7d7"/>
<rect x="1187.9" y="607.5" width="2.2" height="2.2" fill="#d7d7d7"/>
<rect x="1188.6" y="706.7" width="2.2" height="2.2" fill="#d7d7d7"/>
<rect x="1191.9" y="607.5" width="2.2" height="2.2" fill="#d7d7d7"/>
<rect x="1192.6" y="706.7" width="2.2" height="2.2" fill="#d7d7d7"/>
<rect x="1196" y="607.4" width="2.2" height="2.2" fill="#d7d7d7"/>
<rect x="1196.7" y="706.6" width="2.2" height="2.2" fill="#d7d7d7"/>
<rect x="1200" y="607.4" width="2.2" height="2.2" fill="#d7d7d7"/>
<rect x="1200.7" y="706.6" width="2.2" height="2.2" fill="#d7d7d7"/>
<rect x="1204.1" y="607.4" width="2.2" height="2.2" fill="#d7d7d7"/>
<rect x="1204.8" y="706.6" width="2.2" height="2.2" fill="#d7d7d7"/>
<rect x="1208.1" y="607.4" width="2.2" height="2.2" fill="#d7d7d7"/>
<rect x="1208.8" y="706.5" width="2.2" height="2.2" fill="#d7d7d7"/>
<rect x="1212.2" y="607.3" width="2.2" height="2.2" fill="#d7d7d7"/>
<rect x="1212.9" y="706.5" width="2.2" height="2.2" fill="#d7d7d7"/>
<rect x="1216.2" y="607.3" width="2.2" height="2.2" fill="#d7d7d7"/>
<rect x="1216.9" y="706.5" width="2.2" height="2.2" fill="#d7d7d7"/>
<rect x="1054" y="663.7" width="5" height="5" fill="#e4e4e4"/>
<rect x="1172.1" y="629.9" width="6" height="5" fill="#6e6e6e"/>
<rect x="948.5" y="641.6" width="2.5" height="7" fill="#505050"/>
<rect x="1095.9" y="648.8" width="5" height="7" fill="#6e6e6e"/>
<rect x="1104.3" y="687.5" width="2.5" height="2.5" fill="#505050"/>
<rect x="976.7" y="635.9" width="2.5" height="5" fill="#e1e1e1"/>
<rect x="1050.7" y="688.8" width="6" height="3" fill="#d7d7d7"/>
<rect x="1068" y="672.7" width="5" height="4" fill="#ebebeb"/>
<rect x="1214.5" y="701.3" width="2.5" height="4" fill="#e1e1e1"/>
<rect x="1143.8" y="658.9" width="2.5" height="2.5" fill="#606060"/>
<rect x="1038.9" y="689.3" width="5" height="2.5" fill="#505050"/>
<rect x="1169.7" y="613.1" width="3" height="2.5" fill="#f0f0f0"/>
<rect x="1031.4" y="677.1" width="5" height="2.5" fill="#787878"/>
<rect x="1149.7" y="637.2" width="2.5" height="4" fill="#e1e1e1"/>
<rect x="925.3" y="651.3" width="2.5" height="3" fill="#787878"/>
<rect x="1128.5" y="614.3" width="5" height="5" fill="#6e6e6e"/>
<rect x="1121.3" y="630.1" width="6" height="3" fill="#6e6e6e"/>
<rect x="1044.1" y="648.1" width="5" height="5" fill="#787878"/>
<rect x="921.3" y="691.7" width="6" height="4" fill="#505050"/>
<rect x="982.8" y="649.4" width="6" height="7" fill="#606060"/>
<rect x="933.1" y="627.7" width="5" height="4" fill="#505050"/>
<rect x="1148" y="642.4" width="4" height="5" fill="#606060"/>
<rect x="942.6" y="633.2" width="8" height="3" fill="#505050"/>
<rect x="1097.6" y="646.6" width="5" height="3" fill="#f0f0f0"/>
<rect x="1165.4" y="625.1" width="5" height="3" fill="#6e6e6e"/>
<rect x="1012.1" y="634.5" width="6" height="3" fill="#787878"/>
<rect x="967.6" y="670.4" width="6" height="3" fill="#ebebeb"/>
<rect x="1180.3" y="666.7" width="5" height="2.5" fill="#606060"/>
<rect x="953" y="660.2" width="4" height="3" fill="#ebebeb"/>
<rect x="996.7" y="687.6" width="6" height="5" fill="#d7d7d7"/>
<rect x="1074.1" y="696.4" width="2.5" height="3" fill="#787878"/>
<rect x="1061.9" y="671.9" width="6" height="7" fill="#606060"/>
<rect x="1003.6" y="695.8" width="3" height="2.5" fill="#606060"/>
<rect x="1000" y="653.9" width="2.5" height="2.5" fill="#6e6e6e"/>
<rect x="1003.8" y="661.5" width="3" height="2.5" fill="#e1e1e1"/>
<rect x="961.6" y="654.6" width="4" height="7" fill="#6e6e6e"/>
<rect x="1094.6" y="695.7" width="5" height="4" fill="#d7d7d7"/>
<rect x="1203.7" y="614.7" width="8" height="2.5" fill="#f0f0f0"/>
<rect x="940.6" y="642.3" width="3" height="2.5" fill="#606060"/>
<rect x="1054" y="646.6" width="2.5" height="3" fill="#e1e1e1"/>
<rect x="1024.5" y="675" width="2.5" height="5" fill="#505050"/>
<rect x="1174.8" y="664" width="6" height="5" fill="#ebebeb"/>
<rect x="1092.3" y="667.8" width="2.5" height="2.5" fill="#606060"/>
<rect x="1213.2" y="691" width="8" height="4" fill="#ebebeb"/>
<rect x="1195.7" y="674.6" width="5" height="5" fill="#f0f0f0"/>
<rect x="1167.1" y="620.5" width="6" height="2.5" fill="#d7d7d7"/>
<rect x="1097.7" y="656.3" width="3" height="2.5" fill="#f0f0f0"/>
<rect x="1150.3" y="671.9" width="5" height="4" fill="#505050"/>
<rect x="1028.9" y="626.8" width="6" height="3" fill="#e4e4e4"/>
<rect x="971.1" y="695" width="8" height="5" fill="#f0f0f0"/>
<rect x="1183" y="642" width="8" height="4" fill="#787878"/>
<rect x="1107.6" y="685" width="3" height="3" fill="#ebebeb"/>
<rect x="985.7" y="696.3" width="3" height="3" fill="#6e6e6e"/>
<rect x="1067.1" y="688.3" width="2.5" height="2.5" fill="#d7d7d7"/>
<rect x="1162.3" y="623.1" width="5" height="4" fill="#787878"/>
<rect x="1165.1" y="647.1" width="6" height="5" fill="#e1e1e1"/>
<rect x="1131.7" y="688.2" width="6" height="5" fill="#e1e1e1"/>
<rect x="942.6" y="617.4" width="6" height="2.5" fill="#d7d7d7"/>
<rect x="1088.5" y="641.1" width="6" height="2.5" fill="#6e6e6e"/>
<rect x="1039.8" y="630.8" width="4" height="3" fill="#6e6e6e"/>
<rect x="1155.5" y="700.7" width="2.5" height="5" fill="#606060"/>
<rect x="1106.2" y="671.8" width="4" height="2.5" fill="#787878"/>
<rect x="979.5" y="656.7" width="3" height="2.5" fill="#f0f0f0"/>
<rect x="1077.9" y="616.9" width="3" height="4" fill="#e1e1e1"/>
<rect x="1079.9" y="697.9" width="6" height="7" fill="#6e6e6e"/>
<rect x="1036.8" y="684.4" width="3" height="2.5" fill="#ebebeb"/>
<rect x="1195.2" y="677.1" width="3" height="5" fill="#f0f0f0"/>
<rect x="979.1" y="693.4" width="2.5" height="5" fill="#e4e4e4"/>
<rect x="1088.4" y="691.9" width="4" height="5" fill="#e1e1e1"/>
<rect x="1112.2" y="631.6" width="8" height="2.5" fill="#787878"/>
<rect x="992.1" y="649" width="2.5" height="4" fill="#e4e4e4"/>
<rect x="1208.4" y="695.7" width="4" height="2.5" fill="#e1e1e1"/>
<rect x="1069" y="617" width="4" height="7" fill="#ebebeb"/>
<rect x="1146.8" y="656.6" width="2.5" height="3" fill="#606060"/>
<rect x="1046.7" y="617" width="6" height="4" fill="#6e6e6e"/>
<rect x="1059.6" y="702.8" width="8" height="7" fill="#f0f0f0"/>
<rect x="1199" y="656.6" width="8" height="2.5" fill="#787878"/>
<rect x="1050.2" y="663.6" width="8" height="7" fill="#6e6e6e"/>
<rect x="1074.8" y="688.8" width="6" height="4" fill="#d7d7d7"/>
<rect x="1118.6" y="698.4" width="6" height="3" fill="#d7d7d7"/>
<rect x="1171.3" y="699.2" width="6" height="4" fill="#f0f0f0"/>
<rect x="980" y="662.1" width="6" height="2.5" fill="#ebebeb"/>
<rect x="929.4" y="701" width="6" height="5" fill="#e4e4e4"/>
<rect x="1156.5" y="663.2" width="5" height="2.5" fill="#6e6e6e"/>
<rect x="940.3" y="662.6" width="5" height="5" fill="#d7d7d7"/>
<rect x="993.3" y="658.2" width="4" height="5" fill="#f0f0f0"/>
<rect x="1075" y="623.4" width="5" height="7" fill="#505050"/>
<rect x="1192.7" y="624.4" width="2.5" height="2.5" fill="#787878"/>
<rect x="966.3" y="615.5" width="4" height="4" fill="#e1e1e1"/>
<rect x="992.8" y="658.7" width="5" height="7" fill="#606060"/>
<rect x="1171.5" y="668.5" width="8" height="3" fill="#e4e4e4"/>
<rect x="1179" y="615" width="8" height="5" fill="#e4e4e4"/>
<rect x="1102" y="661.4" width="8" height="7" fill="#787878"/>
<rect x="1076.9" y="689.4" width="6" height="7" fill="#6e6e6e"/>
<rect x="989.5" y="680.2" width="4" height="3" fill="#e1e1e1"/>
<rect x="1098.5" y="692.8" width="3" height="3" fill="#787878"/>
<rect x="1181.6" y="624.9" width="3" height="3" fill="#606060"/>
<rect x="997" y="622.9" width="5" height="7" fill="#6e6e6e"/>
<rect x="980" y="670.3" width="2.5" height="2.5" fill="#787878"/>
<rect x="1088.4" y="645.4" width="4" height="2.5" fill="#e4e4e4"/>
<rect x="1107.4" y="644" width="8" height="3" fill="#606060"/>
<rect x="1062.4" y="615.9" width="6" height="7" fill="#e4e4e4"/>
<rect x="1187" y="655.7" width="3" height="3" fill="#606060"/>
<rect x="981.1" y="689.1" width="4" height="2.5" fill="#505050"/>
<rect x="960.6" y="675.1" width="2.5" height="2.5" fill="#e1e1e1"/>
<rect x="1035.8" y="651.9" width="4" height="5" fill="#787878"/>
<rect x="1097.3" y="614.7" width="8" height="2.5" fill="#787878"/>
<rect x="974.2" y="654.8" width="8" height="4" fill="#ebebeb"/>
<rect x="1192" y="666.7" width="2.5" height="7" fill="#505050"/>
<rect x="1015.8" y="621.6" width="8" height="5" fill="#787878"/>
<rect x="1069.5" y="701.2" width="4" height="4" fill="#606060"/>
<rect x="1140" y="682.5" width="5" height="3" fill="#e1e1e1"/>
<rect x="1179.7" y="674.8" width="5" height="3" fill="#ebebeb"/>
<rect x="981.5" y="630.8" width="4" height="4" fill="#f0f0f0"/>
<rect x="950.8" y="693.6" width="8" height="7" fill="#505050"/>
<rect x="989.4" y="698.4" width="8" height="4" fill="#e1e1e1"/>
<rect x="984.4" y="650.5" width="3" height="7" fill="#606060"/>
<rect x="1035.8" y="702.9" width="8" height="3" fill="#606060"/>
<rect x="1145.2" y="700.4" width="2.5" height="2.5" fill="#606060"/>
<rect x="1138" y="636.1" width="5" height="7" fill="#505050"/>
<rect x="1144.8" y="670.9" width="2.5" height="2.5" fill="#d7d7d7"/>
<rect x="995" y="694.9" width="6" height="7" fill="#e4e4e4"/>
<rect x="1043.2" y="660.3" width="2.5" height="5" fill="#606060"/>
<rect x="1082.6" y="673.1" width="2.5" height="5" fill="#6e6e6e"/>
<rect x="1034.7" y="700.3" width="5" height="7" fill="#505050"/>
<rect x="1047.2" y="657.9" width="4" height="7" fill="#ebebeb"/>
<rect x="1096.6" y="646.1" width="4" height="5" fill="#d7d7d7"/>
<rect x="1085.6" y="638.8" width="8" height="4" fill="#505050"/>
<rect x="924.9" y="636.6" width="2.5" height="3" fill="#ebebeb"/>
<rect x="1142.7" y="647.9" width="4" height="5" fill="#505050"/>
<rect x="1092.1" y="677.9" width="4" height="2.5" fill="#787878"/>
<rect x="1047.2" y="656.4" width="3" height="2.5" fill="#e4e4e4"/>
<rect x="950.1" y="686.7" width="5" height="3" fill="#787878"/>
<rect x="1098.1" y="623.8" width="6" height="5" fill="#f0f0f0"/>
<rect x="955.8" y="691.2" width="4" height="7" fill="#6e6e6e"/>
<rect x="957.4" y="653.9" width="8" height="5" fill="#f0f0f0"/>
<rect x="1097.7" y="670.4" width="8" height="5" fill="#e1e1e1"/>
<rect x="1149.7" y="660.4" width="3" height="4" fill="#6e6e6e"/>
<rect x="990.8" y="624.4" width="4" height="7" fill="#e1e1e1"/>
<rect x="1001.8" y="668.5" width="8" height="7" fill="#787878"/>
<rect x="1107.2" y="680.5" width="3" height="3" fill="#e4e4e4"/>
<rect x="1209.2" y="694.2" width="8" height="2.5" fill="#505050"/>
<rect x="923.6" y="637.9" width="2.5" height="7" fill="#505050"/>
<rect x="951.1" y="662.8" width="2.5" height="2.5" fill="#6e6e6e"/>
<rect x="1082.9" y="669.8" width="4" height="5" fill="#f0f0f0"/>
<rect x="1024.9" y="644.1" width="5" height="3" fill="#606060"/>
<rect x="1156.7" y="652.9" width="6" height="3" fill="#f0f0f0"/>
<rect x="1045.5" y="636.9" width="3" height="4" fill="#6e6e6e"/>
<rect x="1113.4" y="701.5" width="4" height="4" fill="#e4e4e4"/>
<rect x="1144.3" y="686.7" width="3" height="5" fill="#e1e1e1"/>
<rect x="1091.6" y="654.7" width="4" height="2.5" fill="#e4e4e4"/>
<rect x="945.4" y="664.8" width="5" height="5" fill="#d7d7d7"/>
<rect x="1162.7" y="613.9" width="4" height="3" fill="#606060"/>
<rect x="1125.3" y="657.4" width="8" height="4" fill="#d7d7d7"/>
<rect x="1180" y="632.4" width="8" height="4" fill="#e1e1e1"/>
<rect x="1187.3" y="641.6" width="5" height="7" fill="#d7d7d7"/>
<rect x="1049.9" y="685.3" width="4" height="5" fill="#e1e1e1"/>
<rect x="986.3" y="700.4" width="8" height="7" fill="#787878"/>
<rect x="945.9" y="688.4" width="2.5" height="4" fill="#ebebeb"/>
<rect x="1093.1" y="684.4" width="8" height="7" fill="#e1e1e1"/>
<rect x="1155.3" y="661.2" width="6" height="7" fill="#6e6e6e"/>
<rect x="973" y="682" width="4" height="2.5" fill="#787878"/>
<rect x="1072.5" y="662.1" width="6" height="4" fill="#505050"/>
<rect x="1112.6" y="685" width="2.5" height="7" fill="#e4e4e4"/>
<rect x="1010.8" y="662.7" width="4" height="2.5" fill="#d7d7d7"/>
<rect x="1137.9" y="693.3" width="2.5" height="2.5" fill="#6e6e6e"/>
<rect x="949.8" y="687.2" width="5" height="3" fill="#787878"/>
<rect x="1065" y="694.6" width="4" height="5" fill="#ebebeb"/>
<rect x="1024.1" y="685.9" width="4" height="3" fill="#f0f0f0"/>
<rect x="1064.6" y="685.4" width="2.5" height="7" fill="#505050"/>
<rect x="1041.8" y="687.4" width="8" height="4" fill="#505050"/>
<rect x="1158.1" y="687.3" width="5" height="7" fill="#505050"/>
<rect x="1075.1" y="676.9" width="2.5" height="5" fill="#ebebeb"/>
<rect x="1189.9" y="634.7" width="3" height="5" fill="#6e6e6e"/>
<rect x="1015.2" y="648.8" width="6" height="4" fill="#d7d7d7"/>
<rect x="1205.7" y="618" width="4" height="2.5" fill="#d7d7d7"/>
<rect x="1111.6" y="682.5" width="3" height="2.5" fill="#f0f0f0"/>
<rect x="926" y="657.6" width="2.5" height="4" fill="#606060"/>
<rect x="978.9" y="646.3" width="6" height="3" fill="#f0f0f0"/>
<rect x="1095.6" y="633.5" width="3" height="4" fill="#ebebeb"/>
<rect x="971.8" y="681.8" width="4" height="7" fill="#e4e4e4"/>
<rect x="1061.7" y="637" width="5" height="4" fill="#e4e4e4"/>
<rect x="1147.5" y="621.4" width="3" height="5" fill="#505050"/>
<rect x="984.6" y="626.3" width="5" height="7" fill="#e4e4e4"/>
<rect x="1148.7" y="683.3" width="2.5" height="3" fill="#505050"/>
<rect x="1178.1" y="693.5" width="5" height="3" fill="#ebebeb"/>
<rect x="1098.9" y="627.5" width="3" height="4" fill="#6e6e6e"/>
<rect x="997.4" y="691.6" width="6" height="3" fill="#d7d7d7"/>
<rect x="1072.3" y="618.4" width="6" height="3" fill="#505050"/>
<rect x="981.2" y="695.9" width="3" height="3" fill="#606060"/>
<rect x="1024.4" y="668.8" width="6" height="2.5" fill="#f0f0f0"/>
<rect x="1124.6" y="620.7" width="8" height="7" fill="#e4e4e4"/>
<rect x="1172.9" y="640" width="3" height="5" fill="#787878"/>
<rect x="1190.2" y="621" width="5" height="3" fill="#505050"/>
<rect x="1080.7" y="660.4" width="3" height="4" fill="#e1e1e1"/>
<rect x="1012" y="620.9" width="4" height="5" fill="#606060"/>
<rect x="1026.8" y="675.2" width="2.5" height="5" fill="#f0f0f0"/>
<rect x="1140.6" y="683" width="2.5" height="5" fill="#505050"/>
<rect x="1175" y="676.3" width="5" height="3" fill="#d7d7d7"/>
<rect x="1086.7" y="654.4" width="2.5" height="3" fill="#6e6e6e"/>
<rect x="1006.2" y="647.6" width="6" height="4" fill="#e1e1e1"/>
<rect x="1142.9" y="662.7" width="2.5" height="4" fill="#787878"/>
<rect x="979.9" y="679.5" width="4" height="4" fill="#d7d7d7"/>
<rect x="1086.5" y="678" width="4" height="5" fill="#ebebeb"/>
<rect x="947.8" y="627.1" width="2.5" height="3" fill="#6e6e6e"/>
<rect x="973.8" y="650.2" width="5" height="7" fill="#606060"/>
<rect x="950.2" y="617.5" width="2.5" height="5" fill="#ebebeb"/>
<rect x="1147.6" y="643.6" width="5" height="7" fill="#6e6e6e"/>
<rect x="1111.4" y="681.7" width="8" height="5" fill="#f0f0f0"/>
<rect x="1018.3" y="650.8" width="2.5" height="5" fill="#e1e1e1"/>
<rect x="1209.8" y="683" width="8" height="7" fill="#e4e4e4"/>
<rect x="926.3" y="644.2" width="4" height="4" fill="#f0f0f0"/>
<rect x="952.1" y="648.2" width="6" height="4" fill="#d7d7d7"/>
<rect x="1163.6" y="667.5" width="3" height="4" fill="#e4e4e4"/>
<rect x="1186.4" y="661.7" width="4" height="7" fill="#e4e4e4"/>
<rect x="1071.9" y="664.8" width="3" height="7" fill="#787878"/>
<rect x="1087.4" y="616" width="8" height="3" fill="#606060"/>
<rect x="961" y="657" width="5" height="4" fill="#e1e1e1"/>
<rect x="948.1" y="692.2" width="4" height="5" fill="#606060"/>
<rect x="1054.1" y="678.8" width="3" height="7" fill="#e4e4e4"/>
<rect x="1081.2" y="619.3" width="4" height="3" fill="#e1e1e1"/>
<rect x="1097.5" y="624.5" width="2.5" height="4" fill="#e1e1e1"/>
<rect x="991.8" y="665.3" width="3" height="3" fill="#e4e4e4"/>
<rect x="1159.4" y="653.5" width="5" height="3" fill="#6e6e6e"/>
<rect x="1011.5" y="673.9" width="8" height="5" fill="#505050"/>
<rect x="967.5" y="651.1" width="2.5" height="3" fill="#e4e4e4"/>
<rect x="1034.6" y="664.7" width="3" height="4" fill="#e4e4e4"/>
<rect x="959.4" y="636.2" width="4" height="2.5" fill="#505050"/>
<rect x="1133.3" y="683.4" width="5" height="5" fill="#606060"/>
<rect x="1059" y="650.4" width="6" height="7" fill="#ebebeb"/>
<rect x="1141.9" y="656.4" width="5" height="5" fill="#ebebeb"/>
<rect x="955.2" y="624.7" width="6" height="4" fill="#e4e4e4"/>
<rect x="1074" y="651.1" width="2.5" height="4" fill="#505050"/>
<rect x="1008" y="669" width="5" height="5" fill="#e1e1e1"/>
<rect x="1141.8" y="640.3" width="6" height="2.5" fill="#787878"/>
<rect x="957.5" y="654.3" width="6" height="5" fill="#505050"/>
<rect x="1060.5" y="623.2" width="3" height="7" fill="#d7d7d7"/>
<rect x="1114.3" y="697.1" width="2.5" height="4" fill="#e4e4e4"/>
<rect x="1045" y="685.6" width="3" height="5" fill="#606060"/>
<rect x="1186.3" y="621.7" width="3" height="2.5" fill="#e4e4e4"/>
<rect x="1090.2" y="653.9" width="4" height="3" fill="#d7d7d7"/>
<rect x="927.8" y="630" width="5" height="5" fill="#e4e4e4"/>
<rect x="1037.6" y="645.7" width="6" height="3" fill="#505050"/>
<rect x="1010.9" y="654.6" width="4" height="4" fill="#e1e1e1"/>
<rect x="1067.7" y="696.9" width="5" height="3" fill="#787878"/>
<rect x="1008" y="696.3" width="2.5" height="3" fill="#e1e1e1"/>
<rect x="1167.2" y="644.6" width="5" height="2.5" fill="#6e6e6e"/>
<rect x="1107.8" y="675.6" width="6" height="3" fill="#e4e4e4"/>
<rect x="1106.6" y="630.5" width="2.5" height="2.5" fill="#d7d7d7"/>
<rect x="1134.2" y="641.1" width="4" height="5" fill="#6e6e6e"/>
<rect x="1019.7" y="699.3" width="5" height="5" fill="#606060"/>
<rect x="971" y="691.1" width="2.5" height="3" fill="#d7d7d7"/>
<rect x="974" y="635.3" width="8" height="4" fill="#d7d7d7"/>
<rect x="1030.6" y="672.9" width="2.5" height="7" fill="#e4e4e4"/>
<rect x="988.1" y="641.1" width="3" height="3" fill="#d7d7d7"/>
<rect x="960" y="673.9" width="5" height="2.5" fill="#f0f0f0"/>
<rect x="1190.3" y="619.4" width="2.5" height="2.5" fill="#d7d7d7"/>
<rect x="1078.8" y="651.3" width="6" height="2.5" fill="#6e6e6e"/>
<rect x="1004.9" y="681.4" width="3" height="3" fill="#d7d7d7"/>
<rect x="1136.5" y="615.8" width="3" height="2.5" fill="#f0f0f0"/>
<rect x="1190.4" y="664.9" width="2.5" height="5" fill="#505050"/>
<rect x="973.9" y="663.9" width="8" height="4" fill="#e1e1e1"/>
<rect x="1114.6" y="683.1" width="6" height="4" fill="#e4e4e4"/>
<rect x="1164.2" y="669.5" width="6" height="7" fill="#6e6e6e"/>
<rect x="1095.7" y="682.2" width="2.5" height="7" fill="#ebebeb"/>
<rect x="990.1" y="653.5" width="4" height="3" fill="#d7d7d7"/>
<rect x="1064.6" y="633.4" width="6" height="7" fill="#f0f0f0"/>
<rect x="997.6" y="632.2" width="8" height="2.5" fill="#f0f0f0"/>
<rect x="1177.4" y="629" width="3" height="7" fill="#505050"/>
<rect x="1100" y="685.3" width="6" height="5" fill="#d7d7d7"/>
<rect x="1172.5" y="615.8" width="2.5" height="3" fill="#e4e4e4"/>
<rect x="1091.4" y="677.8" width="6" height="3" fill="#505050"/>
<rect x="1012.1" y="617.9" width="4" height="7" fill="#e4e4e4"/>
<rect x="1150.6" y="681.3" width="5" height="2.5" fill="#e4e4e4"/>
<rect x="971.2" y="637.1" width="3" height="5" fill="#f0f0f0"/>
<rect x="938.8" y="651.2" width="4" height="3" fill="#505050"/>
<rect x="958.8" y="681.7" width="6" height="3" fill="#6e6e6e"/>
<rect x="1139.8" y="659.7" width="2.5" height="2.5" fill="#787878"/>
<rect x="1041.4" y="660.7" width="2.5" height="5" fill="#e4e4e4"/>
<rect x="1008.5" y="651.9" width="2.5" height="2.5" fill="#787878"/>
<rect x="1007.6" y="624.7" width="3" height="5" fill="#f0f0f0"/>
<rect x="946" y="634.8" width="4" height="4" fill="#787878"/>
<rect x="932.5" y="650.6" width="8" height="2.5" fill="#e1e1e1"/>
<rect x="1088" y="694.8" width="6" height="3" fill="#f0f0f0"/>
<rect x="1174" y="696.2" width="3" height="5" fill="#ebebeb"/>
<rect x="1150.5" y="632.3" width="4" height="3" fill="#6e6e6e"/>
<rect x="1154.3" y="684.7" width="5" height="3" fill="#ebebeb"/>
<rect x="984" y="656" width="4" height="5" fill="#f0f0f0"/>
<rect x="1065.1" y="669.5" width="3" height="5" fill="#787878"/>
<rect x="1079.7" y="651" width="2.5" height="4" fill="#e1e1e1"/>
<rect x="1199.9" y="668.1" width="6" height="3" fill="#d7d7d7"/>
<rect x="1071.5" y="664.2" width="8" height="3" fill="#d7d7d7"/>
<rect x="951" y="619.7" width="8" height="4" fill="#6e6e6e"/>
<rect x="1146.2" y="677.6" width="2.5" height="2.5" fill="#e1e1e1"/>
<rect x="1167.5" y="653.1" width="5" height="4" fill="#d7d7d7"/>
<rect x="1147.5" y="659.4" width="2.5" height="4" fill="#ebebeb"/>
<rect x="1099.6" y="657" width="3" height="3" fill="#e4e4e4"/>
<rect x="1095.7" y="616.4" width="4" height="5" fill="#ebebeb"/>
<rect x="1061.8" y="675.5" width="6" height="7" fill="#d7d7d7"/>
<rect x="1013.2" y="654.3" width="5" height="3" fill="#787878"/>
<rect x="909" y="661.7" width="4" height="4" fill="#646464"/>
<rect x="898.4" y="693.2" width="2.5" height="2.5" fill="#a5a5a5"/>
<rect x="897.9" y="669" width="2.5" height="2.5" fill="#545454"/>
<rect x="906.8" y="656.8" width="2.5" height="4" fill="#545454"/>
<rect x="910.8" y="631.4" width="6" height="4" fill="#545454"/>
<rect x="912.1" y="693.4" width="2.5" height="4" fill="#545454"/>
<rect x="907.8" y="622.3" width="4" height="2.5" fill="#b4b4b4"/>
<rect x="898" y="642.1" width="4" height="4" fill="#646464"/>
<rect x="892.7" y="649.2" width="4" height="2.5" fill="#a5a5a5"/>
<rect x="904.7" y="633.7" width="2.5" height="4" fill="#b4b4b4"/>
<rect x="908.2" y="656.3" width="4" height="4" fill="#545454"/>
<rect x="910.3" y="622.3" width="2.5" height="4" fill="#a5a5a5"/>
<rect x="890.2" y="658.1" width="6" height="4" fill="#b4b4b4"/>
<rect x="906.4" y="695.1" width="2.5" height="2.5" fill="#545454"/>
<rect x="897.5" y="695.7" width="6" height="4" fill="#a5a5a5"/>
<rect x="908.7" y="695.1" width="6" height="4" fill="#b4b4b4"/>
<rect x="904" y="701.6" width="4" height="2.5" fill="#646464"/>
<rect x="907.5" y="670.5" width="6" height="4" fill="#b4b4b4"/>
<rect x="890.2" y="617.5" width="4" height="4" fill="#b4b4b4"/>
<rect x="912" y="647.4" width="2.5" height="4" fill="#a5a5a5"/>
<rect x="900.8" y="655.9" width="2.5" height="2.5" fill="#646464"/>
<rect x="895.2" y="635.5" width="2.5" height="2.5" fill="#545454"/>
<rect x="911.5" y="703.9" width="2.5" height="2.5" fill="#b4b4b4"/>
<rect x="909.5" y="683.6" width="2.5" height="4" fill="#a5a5a5"/>
<rect x="897.5" y="695.2" width="4" height="2.5" fill="#b4b4b4"/>
<rect x="905.7" y="702.5" width="2.5" height="2.5" fill="#a5a5a5"/>
<rect x="903.8" y="657.5" width="6" height="4" fill="#a5a5a5"/>
<rect x="898.8" y="645.8" width="6" height="4" fill="#646464"/>
<rect x="904.3" y="645.3" width="6" height="2.5" fill="#646464"/>
<rect x="910.3" y="704.8" width="2.5" height="4" fill="#545454"/>
<rect x="909.3" y="659.5" width="6" height="4" fill="#545454"/>
<rect x="893.1" y="693.3" width="4" height="2.5" fill="#a5a5a5"/>
<rect x="895" y="659.2" width="6" height="4" fill="#a5a5a5"/>
<rect x="905.9" y="634.8" width="6" height="4" fill="#646464"/>
<rect x="897.1" y="683.1" width="6" height="2.5" fill="#b4b4b4"/>
<rect x="904.1" y="622.8" width="6" height="4" fill="#646464"/>
<rect x="891.8" y="646.8" width="6" height="4" fill="#646464"/>
<rect x="904.9" y="703.4" width="4" height="2.5" fill="#a5a5a5"/>
<rect x="905.4" y="650.7" width="6" height="4" fill="#b4b4b4"/>
<rect x="911.6" y="704.8" width="2.5" height="2.5" fill="#545454"/>
<circle cx="928.1" cy="617.7" r="6.5" fill="#d2d2d2"/>
<circle cx="928.1" cy="617.7" r="3" fill="#b0b0b0"/>
<circle cx="992.6" cy="614.3" r="6.5" fill="#d2d2d2"/>
<circle cx="992.6" cy="614.3" r="3" fill="#b0b0b0"/>
<circle cx="1037.6" cy="613" r="6.5" fill="#d2d2d2"/>
<circle cx="1037.6" cy="613" r="3" fill="#b0b0b0"/>
<circle cx="1082.6" cy="612.7" r="6.5" fill="#d2d2d2"/>
<circle cx="1082.6" cy="612.7" r="3" fill="#b0b0b0"/>
<circle cx="1209.1" cy="614.8" r="6.5" fill="#d2d2d2"/>
<circle cx="1209.1" cy="614.8" r="3" fill="#b0b0b0"/>
<circle cx="929.2" cy="698.7" r="6.5" fill="#d2d2d2"/>
<circle cx="929.2" cy="698.7" r="3" fill="#b0b0b0"/>
<circle cx="1018.2" cy="700.1" r="6.5" fill="#d2d2d2"/>
<circle cx="1018.2" cy="700.1" r="3" fill="#b0b0b0"/>
<circle cx="1209.7" cy="696.7" r="6.5" fill="#d2d2d2"/>
<circle cx="1209.7" cy="696.7" r="3" fill="#b0b0b0"/>
<rect x="944" y="632.5" width="33" height="76" fill="none" stroke="#747474" stroke-width="1.1"/>
<rect x="1032" y="631.8" width="65" height="74" fill="none" stroke="#747474" stroke-width="1.1"/>
<rect x="1119" y="631.2" width="58" height="72" fill="none" stroke="#747474" stroke-width="1.1"/>
<rect x="1181" y="624.9" width="20" height="78" fill="none" stroke="#747474" stroke-width="1.1"/>
<path d="M1005.6 612.2L1006.2 706.2" stroke="#787878" stroke-width="1.2"/>
<path d="M1098.6 611.5L1099.2 705.5" stroke="#787878" stroke-width="1.2"/>
<rect x="1224.6" y="610.6" width="17" height="2.4" fill="#747474"/>
<rect x="1224.6" y="615.6" width="17" height="2.4" fill="#747474"/>
<rect x="1224.7" y="620.6" width="17" height="2.4" fill="#747474"/>
<rect x="1224.7" y="625.6" width="17" height="2.4" fill="#747474"/>
<rect x="1224.7" y="630.6" width="17" height="2.4" fill="#747474"/>
<rect x="1224.8" y="635.6" width="17" height="2.4" fill="#747474"/>
<rect x="1224.8" y="640.6" width="17" height="2.4" fill="#747474"/>
<rect x="1224.8" y="645.6" width="17" height="2.4" fill="#747474"/>
<rect x="1224.9" y="650.6" width="17" height="2.4" fill="#747474"/>
<rect x="1224.9" y="655.6" width="17" height="2.4" fill="#747474"/>
<rect x="1224.9" y="660.6" width="17" height="2.4" fill="#747474"/>
<rect x="1225" y="665.6" width="17" height="2.4" fill="#747474"/>
<rect x="1225" y="670.6" width="17" height="2.4" fill="#747474"/>
<rect x="1225" y="675.6" width="17" height="2.4" fill="#747474"/>
<rect x="1225.1" y="680.6" width="17" height="2.4" fill="#747474"/>
<rect x="1225.1" y="685.6" width="17" height="2.4" fill="#747474"/>
<rect x="1225.2" y="690.6" width="17" height="2.4" fill="#747474"/>
<rect x="1225.2" y="695.6" width="17" height="2.4" fill="#747474"/>
<rect x="1225.2" y="700.6" width="17" height="2.4" fill="#747474"/>
<rect x="1225.3" y="705.6" width="17" height="2.4" fill="#747474"/>
<rect x="1317.7" y="377.7" width="74" height="220" fill="#121212"/>
<rect x="1323.1" y="433.7" width="61.8" height="103.4" rx="6" fill="#787878"/>
<rect x="1327.2" y="453.2" width="10.1" height="71.6" fill="#c0c0c0"/>
<rect x="1374.4" y="452.8" width="9.5" height="71.6" fill="#c0c0c0"/>
<rect x="1338.7" y="450.6" width="33.7" height="76.4" rx="9" fill="#c4c4c4" stroke="#dedede" stroke-width="1.2"/>
<rect x="1341.7" y="453.7" width="27.8" height="70.3" rx="7" fill="none" stroke="#787878" stroke-width="1"/>
<rect x="1322.2" y="538.7" width="64" height="39" rx="4" fill="#282828"/>
<rect x="1340.2" y="543.7" width="38" height="20" rx="5" fill="#181818"/>
<rect x="1324.3" y="557.9" width="21" height="18" rx="3" fill="#383838"/>
<circle cx="1333.1" cy="549.9" r="2.2" fill="#969696"/>
<rect x="1294.6" y="325.4" width="56" height="9.5" fill="#0c0c0c"/>
<rect x="1298.7" y="334.9" width="45" height="10" fill="#a8a8a8"/>
<path d="M1343.6 334.8 L1350.7 344.7 L1364.7 352.1 L1350.7 352.7 L1338.7 344.8" fill="#a8a8a8"/>
<rect x="1323.3" y="355.4" width="23.8" height="17" rx="2" fill="#848484"/>
<circle cx="1335.8" cy="363" r="8" fill="#b0b0b0"/>
<rect x="1350.8" y="358.7" width="18" height="15" rx="2" fill="#767676"/>
<circle cx="1357.1" cy="366" r="4.5" fill="#b0b0b0"/>
<path d="M1320.9 378.2 L1352.9 377.9 Q1356.9 377.9 1357 383.7 L1357 393.7 Q1361.2 409.7 1377.2 418.6 L1377.3 433.6 L1318.3 434 L1318 382 Q1317.9 378.2 1320.9 378.2 Z" fill="#141414" stroke="#020202" stroke-width="1.6"/>
<path d="M1363.7 350.2 L1405.3 350 L1405.7 406.3 L1375.1 406.6 Q1366.1 403.6 1365 393.6 Z" fill="#181818"/>
<path d="M1360.9 375.7 L1361.1 395.7 Q1364.2 410.6 1380.2 414.5 L1401.2 414.4" fill="none" stroke="#363636" stroke-width="9" opacity="0.9"/>
<circle cx="1412.8" cy="366.8" r="6" fill="#464646" stroke="#969696" stroke-width="2"/>
<circle cx="1413" cy="395.1" r="6.5" fill="#cdcdcd"/>
<circle cx="1413" cy="395.1" r="9.5" fill="none" stroke="#6e6e6e" stroke-width="2.4" opacity="0.8"/>
<circle cx="1413.2" cy="418.9" r="6.3" fill="#bebebe"/>
<rect x="1393.1" y="405.4" width="18" height="8" fill="#6e6e6e"/>
<rect x="1391.8" y="430.3" width="42.6" height="46.6" rx="2" fill="#545454" stroke="#969696" stroke-width="1.2"/>
<ellipse cx="1406.5" cy="453.3" rx="9" ry="14" fill="#323232"/>
<ellipse cx="1422.4" cy="450.2" rx="5" ry="9" fill="#1e1e1e"/>
<rect x="1391.9" y="477.3" width="38" height="70" fill="#686868"/>
<rect x="1395.7" y="481.3" width="30" height="16" fill="#969696"/>
<circle cx="1408.9" cy="516.3" r="6" fill="#c8c8c8"/>
<rect x="1398.1" y="532.3" width="26" height="13" fill="#a0a0a0"/>
<rect x="1385.5" y="550.9" width="49.7" height="40.4" rx="3" fill="#808080" stroke="#aaaaaa" stroke-width="1.2"/>
<ellipse cx="1407.3" cy="570.3" rx="12" ry="15" fill="#545454"/>
<rect x="1385.6" y="593.3" width="43.8" height="26.5" rx="3" fill="#282828" stroke="#a0a0a0" stroke-width="1.2"/>
<rect x="1396.5" y="597.3" width="28" height="18" fill="#606060"/>
<rect x="1320.9" y="577.8" width="40.6" height="50.6" rx="3" fill="#606060"/>
<rect x="1330.5" y="587.8" width="22" height="35" fill="#464646"/>
<circle cx="1341.6" cy="609.8" r="5" fill="#aaaaaa"/>
<rect x="1365.5" y="584.6" width="15.2" height="43.6" rx="5" fill="#969696"/>
<circle cx="1371" cy="589.6" r="5" fill="#e1e1e1"/>
<circle cx="1373.1" cy="614.6" r="2.2" fill="#323232"/>
<rect x="1264.6" y="609" width="41.2" height="21" rx="2" fill="#787878"/>
<rect x="1270.6" y="613.2" width="30" height="12" rx="3" fill="none" stroke="#b4b4b4" stroke-width="1.2"/>
<rect x="1245.6" y="606.4" width="19" height="24" fill="#464646"/>
<path d="M1267 638.1 L1335.8 637.7 L1341.7 632.5 L1421.7 631.9 L1422.3 708.6 L1346.3 709.2 L1341.2 703.8 L1267.4 704.3 Z" fill="#848484" stroke="#b0b0b0" stroke-width="2.6"/>
<circle cx="1263.8" cy="641.9" r="3.5" fill="#787878" stroke="#b0b0b0" stroke-width="1.6"/>
<rect x="1382.7" y="622.4" width="29" height="11" rx="2" fill="#969696"/>
<rect x="1273" y="641.5" width="56.4" height="57.9" rx="3" fill="#8c8c8c" stroke="#aaaaaa" stroke-width="1"/>
<rect x="1345.3" y="638" width="71.6" height="67.3" rx="3" fill="#969696" stroke="#bababa" stroke-width="1.2"/>
<circle cx="1301.9" cy="671.1" r="25.1" fill="#222222" stroke="#c4c4c4" stroke-width="6.2"/>
<rect x="1288" y="657.1" width="28" height="28" fill="#2c2c2c"/>
<circle cx="1379.3" cy="671.3" r="28" fill="none" stroke="#b4b4b4" stroke-width="9"/>
<circle cx="1379.3" cy="671.3" r="20.3" fill="#222222"/>
<rect x="1365" y="658.5" width="29" height="26" fill="#2a2a2a"/>
<rect x="706.6" y="331.5" width="94" height="15.5" fill="#0a0a0a"/>
<rect x="682.6" y="332.4" width="14" height="12" fill="#181818"/>
<rect x="710.6" y="335.2" width="18" height="8" fill="#222222"/>
<rect x="697" y="323.2" width="9.4" height="25.1" fill="#040404"/>
<rect x="695.8" y="720.4" width="9.9" height="21.9" fill="#040404"/>
<path d="M798.7 346.7 L798.7 342.7 Q800.6 330.6 813.6 330.6 L857.6 330.2 Q870.6 330.1 872.7 342.1 L872.7 346.1 Z" fill="#060606"/>
<path d="M917 345.8 L917 341.8 Q918.9 334.8 931.9 334.7 L936.4 334.7 Q949.4 334.6 951.5 341.6 L951.5 345.6 Z" fill="#060606"/>
<path d="M964.1 345.5 L964.1 341.5 Q966 334.5 979 334.4 L1002.3 334.2 Q1015.3 334.1 1017.4 341.1 L1017.4 345.1 Z" fill="#060606"/>
<path d="M1034.3 345 L1034.3 341 Q1036.2 329.5 1049.2 329.4 L1093.6 329.1 Q1106.6 329 1108.7 340.5 L1108.7 344.5 Z" fill="#060606"/>
<path d="M1148.7 344.2 L1148.7 340.2 Q1150.6 329.2 1163.6 329.1 L1192.6 328.9 Q1205.6 328.8 1207.7 339.8 L1207.7 343.8 Z" fill="#060606"/>
<path d="M1221.7 343.7 L1221.6 339.7 Q1223.6 329.1 1236.6 329 L1265.6 328.8 Q1278.6 328.8 1280.6 339.2 L1280.7 343.2 Z" fill="#060606"/>
<path d="M733.7 342.1L1135.7 341.9" stroke="#b0b0b0" stroke-width="1.1"/>
<rect x="1135.6" y="341" width="145.6" height="3.6" fill="#b2b2b2"/>
<rect x="1152.3" y="334.8" width="51.3" height="6.2" rx="3.1" fill="#282828" stroke="#d7d7d7" stroke-width="1.3"/>
<rect x="1164.3" y="333.6" width="6" height="2.8" fill="#141414"/>
<rect x="1185.6" y="333.5" width="6" height="2.8" fill="#141414"/>
<rect x="1155.3" y="325" width="45.3" height="1.6" fill="#0e0e0e"/>
<rect x="1224.6" y="334.2" width="52" height="6.2" rx="3.1" fill="#282828" stroke="#d7d7d7" stroke-width="1.3"/>
<rect x="1236.6" y="333.1" width="6" height="2.8" fill="#141414"/>
<rect x="1258.6" y="333" width="6" height="2.8" fill="#141414"/>
<rect x="1227.5" y="324.5" width="46" height="1.6" fill="#0e0e0e"/>
<rect x="879.6" y="337.6" width="4.6" height="9.5" fill="#bababa"/>
<rect x="876.9" y="346.1" width="10" height="2.4" fill="#aaaaaa"/>
<rect x="1023.2" y="336.5" width="4.6" height="9.5" fill="#bababa"/>
<rect x="1020.5" y="345" width="10" height="2.4" fill="#aaaaaa"/>
<rect x="1115.8" y="335.9" width="4.6" height="9.5" fill="#bababa"/>
<rect x="1113.1" y="344.4" width="10" height="2.4" fill="#aaaaaa"/>
<rect x="1139.4" y="335.7" width="4.6" height="9.5" fill="#bababa"/>
<rect x="1136.7" y="344.2" width="10" height="2.4" fill="#aaaaaa"/>
<rect x="1212" y="335.2" width="4.6" height="9.5" fill="#bababa"/>
<rect x="1209.3" y="343.7" width="10" height="2.4" fill="#aaaaaa"/>
<rect x="1284.3" y="334.7" width="4.6" height="9.5" fill="#bababa"/>
<rect x="1281.7" y="343.2" width="10" height="2.4" fill="#aaaaaa"/>
<rect x="895.6" y="337.9" width="9" height="4" fill="#8c8c8c"/>
<rect x="987.7" y="342.8" width="9" height="4" fill="#8c8c8c"/>
<rect x="1073.6" y="336.7" width="9" height="4" fill="#8c8c8c"/>
<rect x="851.7" y="340.3" width="9" height="4" fill="#8c8c8c"/>
<rect x="850.7" y="341.7" width="20" height="3" fill="#969696"/>
<path d="M915.3 720.3 Q918.4 731.8 929.4 731.7 L955.4 731.6 Q966.4 731.5 969.3 720 Z" fill="#060606"/>
<path d="M981.3 719.9 Q984.4 731.4 995.4 731.3 L1037.4 731 Q1048.4 730.9 1051.3 719.4 Z" fill="#060606"/>
<path d="M1069.3 719.2 Q1072.4 730.7 1083.4 730.6 L1127.4 730.3 Q1138.4 730.3 1141.3 718.7 Z" fill="#060606"/>
<path d="M1179.3 718.5 Q1182.4 729.9 1193.4 729.9 L1237.4 729.6 Q1248.4 729.5 1251.3 718 Z" fill="#060606"/>
<path d="M881.3 720.1L1261.4 720" stroke="#969696" stroke-width="1.3"/>
<rect x="904.6" y="717.9" width="3.6" height="10" fill="#aaaaaa"/>
<rect x="971.6" y="717.4" width="3.6" height="10" fill="#aaaaaa"/>
<rect x="1055.6" y="716.8" width="3.6" height="10" fill="#aaaaaa"/>
<rect x="1148.6" y="716.2" width="3.6" height="10" fill="#aaaaaa"/>
<rect x="1169.6" y="716" width="3.6" height="10" fill="#aaaaaa"/>
<rect x="1256.6" y="715.4" width="3.6" height="10" fill="#aaaaaa"/>
<rect x="1321.3" y="709.7" width="80" height="16" fill="#080808"/>
<rect x="1241.3" y="714.2" width="90" height="5" fill="#3c3c3c"/>
<rect x="790.1" y="635.7" width="4" height="101" fill="#acacac"/>
<rect x="716.3" y="718" width="75" height="6" fill="#464646"/>
<rect x="736.3" y="714" width="40" height="4" fill="#aaaaaa"/>
<circle cx="1400.9" cy="341" r="2.4" fill="#080808"/>
<circle cx="1412.2" cy="343.8" r="2.4" fill="#080808"/>
<circle cx="1421.7" cy="349.2" r="2.4" fill="#080808"/>
<circle cx="1426.8" cy="355.5" r="2.4" fill="#080808"/>
<circle cx="1431.1" cy="365.5" r="2.4" fill="#080808"/>
<circle cx="1432.9" cy="375.2" r="2.4" fill="#080808"/>
<circle cx="658.6" cy="338.7" r="2" fill="#080808"/>
<circle cx="649.7" cy="343.7" r="2" fill="#080808"/>
<circle cx="642.7" cy="350.8" r="2" fill="#080808"/>
<circle cx="636.8" cy="358.8" r="2" fill="#080808"/>
<defs><radialGradient id="trd"><stop offset="0" stop-color="#000" stop-opacity=".55"/><stop offset="1" stop-color="#000" stop-opacity="0"/></radialGradient></defs>
<circle cx="1434.6" cy="335.1" r="62" fill="url(#trd)"/>
</g></g>
</svg><!--/PHONE-->
<div class="abs ov" style="left:6px;top:7px;color:#ff8072;letter-spacing:1.1px">Im: 1/1</div>
<div class="abs ov" style="left:6px;top:32px;color:#ffff80">Se: 1</div>
<div class="abs ov" style="right:24px;top:7px;color:#ffff80;text-align:right;letter-spacing:-.9px">TEST</div>
<div class="abs ov" style="right:24px;top:32px;color:#ffff80;text-align:right;letter-spacing:-.9px">TEST</div>
<div class="abs ov" style="left:6px;top:853px;color:#ff8072;letter-spacing:.65px">X: 1179 Y: 1206 Val: 2125</div>
<div class="abs ov" style="left:6px;top:878px;color:#ff8072;letter-spacing:.48px">WL: 2446 WW: 4780</div>
<svg class="abs" style="left:0;top:0" width="1769" height="931" shape-rendering="crispEdges">
<g fill="#ff4848">
<rect x="3" y="202" width="1" height="528"/>
<rect x="3" y="202" width="4" height="1"/><rect x="3" y="729" width="4" height="1"/>
<rect x="3" y="255" width="3" height="1"/><rect x="3" y="308" width="3" height="1"/><rect x="3" y="360" width="3" height="1"/><rect x="3" y="413" width="3" height="1"/><rect x="3" y="466" width="3" height="1"/><rect x="3" y="518" width="3" height="1"/><rect x="3" y="571" width="3" height="1"/><rect x="3" y="624" width="3" height="1"/><rect x="3" y="676" width="3" height="1"/>
<rect x="613" y="928" width="528" height="1"/>
<rect x="613" y="925" width="1" height="4"/><rect x="1140" y="925" width="1" height="4"/>
<rect x="666" y="926" width="1" height="3"/><rect x="719" y="926" width="1" height="3"/><rect x="771" y="926" width="1" height="3"/><rect x="824" y="926" width="1" height="3"/><rect x="877" y="926" width="1" height="3"/><rect x="929" y="926" width="1" height="3"/><rect x="982" y="926" width="1" height="3"/><rect x="1035" y="926" width="1" height="3"/><rect x="1087" y="926" width="1" height="3"/>
</g></svg>
<div class="abs" style="left:1753px;top:0;width:16px;height:931px;background:#222;border-left:1px solid #2e2e2e"></div>
</div>
<div class="abs" style="left:1919px;top:30px;width:1px;height:1006px;background:#6c6c6c"></div>
<div class="abs" id="aw">
<div class="abs" id="awt"></div>
<div class="abs" id="awtitle">RadiAnt - Local archive - RadiAnt DICOM Viewer 2024.2 BETA #17900 (64-bit) - expires in 24 days</div>
<svg class="abs" style="left:770px;top:0" width="96" height="30"><g stroke="#222" stroke-width="1.2" fill="none"><path d="M9.5 15.5h11"/><rect x="41.5" y="9.5" width="10" height="10"/><path d="M73.5 9.5l10 10M83.5 9.5l-10 10"/></g></svg>
<div class="abs" id="awtb"></div>
<svg class="abs" style="left:0;top:0" width="866" height="100" viewBox="1054 805 866 100">
<g transform="translate(1054,805)"><use href="#ralogo"/></g>
<use href="#drw" x="1064.500" y="841.500" transform="translate(0,0)"/>
<g transform="translate(1098,842)">
 <rect x=".4" y=".4" width="26.400" height="23.600" fill="#3a3a3a" stroke="#222" stroke-width=".8"/>
 <rect x="1" y="1" width="3.400" height="22.400" fill="#777"/>
 <g fill="#ddd"><rect x="1.600" y="3" width="2.200" height="1.600"/><rect x="1.600" y="7" width="2.200" height="1.600"/><rect x="1.600" y="11" width="2.200" height="1.600"/><rect x="1.600" y="15" width="2.200" height="1.600"/><rect x="1.600" y="19" width="2.200" height="1.600"/></g>
 <rect x="5" y="1" width="21.400" height="2.400" fill="#666"/>
 <path d="M14.200 6.400q-3.800 1-5 6.600-.8 5.600 0 7.200 3.400 1 5-1.600zM17 6.400q3.800 1 5 6.600 .8 5.600 0 7.200-3.400 1-5-1.600z" fill="#d8d8d8"/>
 <path d="M15.600 4.400v9M15.600 11l-3 3.600M15.600 11l3 3.600" stroke="#888" stroke-width=".9" fill="none"/>
</g>
<rect x="1135" y="839" width="1" height="31" fill="#555"/>
<use href="#fld" x="1143" y="843.400"/><use href="#dd" x="1177.600" y="852"/>
<use href="#cd" x="1209" y="853.800"/>
<use href="#dl" x="1235" y="841.600"/>
<g opacity=".55"><circle cx="1280.400" cy="854" r="12" fill="#d4d4d4" stroke="#9a9a9a" stroke-width="2.400"/><path d="M1272.200 845.600l16.600 16.600" stroke="#9a9a9a" stroke-width="2.600"/></g>
<rect x="1304" y="839" width="1" height="31" fill="#555"/>
<use href="#flp" x="1314" y="841.600"/>
<rect x="1350" y="839" width="1" height="31" fill="#555"/>
<g transform="translate(1362,841)">
 <path d="M2.600 6.600h17.800l-1.200 17.600q-.2 1.600-1.800 1.600H5.600q-1.600 0-1.800-1.600z" fill="url(#gw)" stroke="#555" stroke-width="1.100"/>
 <rect x=".8" y="3.400" width="21.400" height="3.200" rx="1.400" fill="#e8e8e8" stroke="#555" stroke-width="1"/>
 <path d="M7.600 3.200v-1.400q0-1 1-1h5.800q1 0 1 1v1.400" fill="none" stroke="#555" stroke-width="1"/>
 <g fill="#fff" stroke="#555" stroke-width=".9"><rect x="5.800" y="9.400" width="2.600" height="13.400" rx="1.200"/><rect x="10.200" y="9.400" width="2.600" height="13.400" rx="1.200"/><rect x="14.600" y="9.400" width="2.600" height="13.400" rx="1.200"/></g>
</g>
<g><circle cx="1075.200" cy="890.600" r="8.800" fill="#f8fff8" stroke="#2a6a2a" stroke-width="1"/><path d="M1075.200 890.600v-8.800a8.800 8.800 0 0 1 8.400 6.200z" fill="#5cc860" stroke="#2a6a2a" stroke-width=".8"/></g>
</svg>
<div class="abs" id="awinfo">Studies: 1  Images: 1  Size: 9.5 MB</div>
<div class="abs" id="awsearch">Search all studies</div>
<svg class="abs" style="left:833px;top:76px" width="18" height="18"><circle cx="9" cy="9" r="7.6" fill="#333"/><circle cx="9" cy="9" r="6" fill="none" stroke="#fff" stroke-width="0"/><path d="M5.6 5.6l6.8 6.8M12.4 5.6l-6.8 6.8" stroke="#fff" stroke-width="2.4"/></svg>
<div class="abs" id="awtable">
<div class="abs th" style="left:0;border-left:none">Study date</div>
<div class="abs th" style="left:150px">Patient name</div>
<div class="abs th" style="left:400px">Date of birth</div>
<div class="abs th" style="left:500px">Patient ID</div>
<div class="abs th" style="left:700px">Modality</div>
<div class="abs" id="awrow"><div class="abs td" style="left:153px">Test</div><div class="abs td" style="left:503px;letter-spacing:-1.2px">TEST</div><div class="abs td" style="left:703px;letter-spacing:-1.1px">CR</div></div>
</div>
</div>
<div class="abs" id="status">Ready</div>
</body></html>
